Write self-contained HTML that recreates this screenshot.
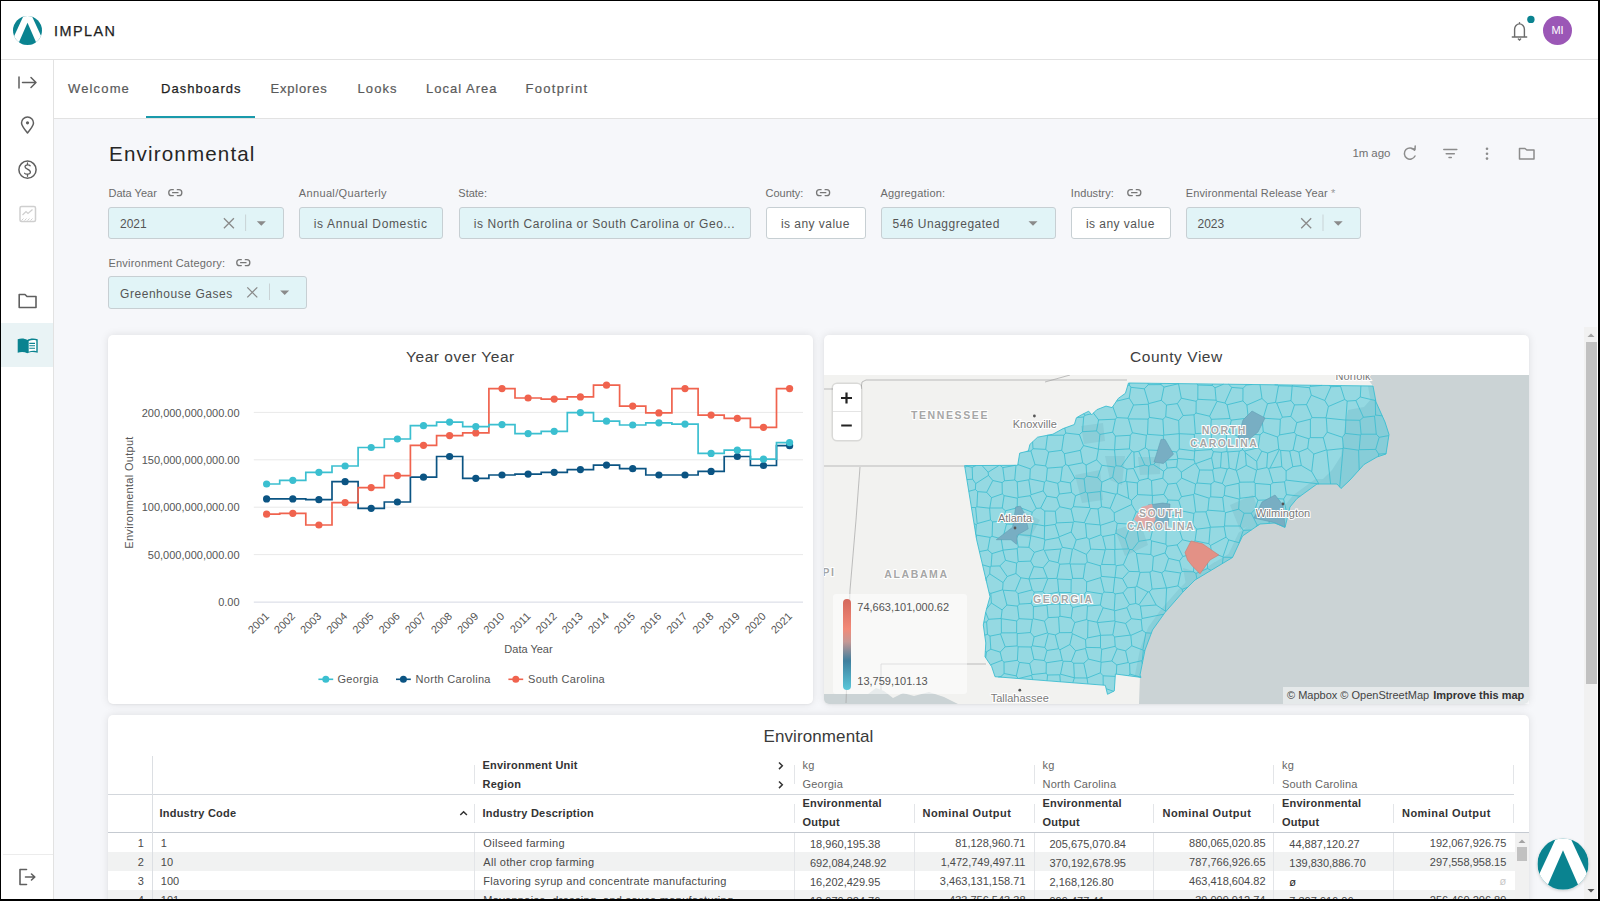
<!DOCTYPE html>
<html><head><meta charset="utf-8">
<style>
*{box-sizing:border-box;margin:0;padding:0}
html,body{width:1600px;height:901px;overflow:hidden;background:#f6f7fa}
body{font-family:"Liberation Sans",sans-serif;position:relative;color:#333}
.a{position:absolute}
.t{position:absolute;white-space:nowrap;line-height:1}
.bd{position:absolute;background:#000;z-index:100}
.lb{font-size:11px;color:#6b6b6b}
.ct{height:32px;border:1px solid #c7cfd3;border-radius:3px}
.tl{background:#e1f4f7}
.wh{background:#fff}
.cx{font-size:12px;color:#555}
.card{background:#fff;border-radius:5px;box-shadow:0 0 9px rgba(0,0,0,0.1),0 1px 2px rgba(0,0,0,0.04)}
svg text{font-family:"Liberation Sans",sans-serif}
.ax{font-size:11px;fill:#555}
.lg{font-size:11px;fill:#555;letter-spacing:0.3px}
.th{font-size:11px;font-weight:bold;color:#333;letter-spacing:0.22px}
.tr{font-size:11px;color:#666;letter-spacing:0.2px}
.tv{font-size:11px;color:#4a4a4a}
</style></head><body>
<!-- header -->
<div class="a" style="left:0;top:0;width:1600px;height:60px;background:#fff;border-bottom:1px solid #e2e2e2"></div>
<svg class="a" style="left:12.5px;top:16px" width="29" height="29" viewBox="0 0 100 100">
<defs><clipPath id="lc"><circle cx="50" cy="50" r="50"/></clipPath></defs>
<g clip-path="url(#lc)"><rect width="100" height="100" fill="#0a8390"/>
<polygon points="36,0 65,0 116,110 -15,110" fill="#fff"/>
<polygon points="50,23 88,110 12,110" fill="#0a8390"/></g></svg>
<div class="t" style="left:54px;top:23.6px;font-size:14.4px;color:#1e1e1e;-webkit-text-stroke:0.25px #1e1e1e;letter-spacing:1.45px">IMPLAN</div>
<!-- bell -->
<svg class="a" style="left:1508px;top:18px;overflow:visible" width="28" height="26" viewBox="0 0 28 26">
<path d="M4.3 19 H18.7 M6.6 19 V11.3 A4.9 5.4 0 0 1 16.4 11.3 V19 M11.5 4.6 V5.9 M10.4 20.9 L11.5 22 L12.6 20.9" stroke="#6b6b6b" stroke-width="1.4" fill="none" stroke-linecap="round"/>
<circle cx="22.9" cy="1.4" r="3.7" fill="#0a8390"/>
</svg>
<div class="a" style="left:1543px;top:16px;width:29px;height:29px;border-radius:50%;background:#9b57b6"></div>
<div class="t" style="left:1543px;top:25px;width:29px;text-align:center;font-size:11px;color:#fff">MI</div>

<!-- sidebar -->
<div class="a" style="left:0;top:60px;width:54px;height:841px;background:#fff;border-right:1px solid #e2e2e2"></div>
<div class="a" style="left:1px;top:323px;width:52px;height:44px;background:#e9f3f5"></div>
<div class="a" style="left:3px;top:854px;width:50px;height:1px;background:#ececec"></div>
<svg class="a" style="left:0;top:60px" width="54" height="841" viewBox="0 60 54 841">
<g stroke="#5f5f5f" stroke-width="1.5" fill="none" stroke-linecap="round" stroke-linejoin="round">
<path d="M19 77 V88 M22.5 82.5 H36 M31 77.5 L36 82.5 L31 87.5"/>
<path d="M27.5 133 C 23 127.5, 21.5 125.5, 21.5 123 A 6 6 0 1 1 33.5 123 C 33.5 125.5, 32 127.5, 27.5 133 Z"/>
<circle cx="27.5" cy="169.7" r="8.6"/>
<path d="M30.2 165.8 C 29.5 164.6, 25.2 164.2, 25 166.8 C 24.8 169.2, 30.6 169, 30.4 172.2 C 30.2 174.8, 25.4 174.6, 24.6 173.2 M27.5 163 V164.5 M27.5 174.8 V176.3" stroke-width="1.3"/>
<path d="M19.2 294.5 H25 L27 296.5 H36 V307.5 H19.2 Z" stroke-width="1.6"/>
<path d="M20.5 869.5 H26.5 M20 869.5 V884.5 M20.5 884.5 H26.5 M25.5 877 H34.5 M31.5 874 L34.8 877 L31.5 880" stroke-width="1.6"/>
</g>
<circle cx="27.5" cy="122.8" r="1.6" fill="#5f5f5f"/>
<g stroke="#cfcfcf" stroke-width="1.5" fill="none">
<rect x="20" y="206.5" width="15.5" height="15" rx="1.5"/>
<path d="M22.5 215 L26 211.5 L28 213.5 L32.5 209.5" stroke-width="1.2"/>
<path d="M21.5 220.5 L23.5 218.5 M24.5 220.5 L26.5 218.5 M27.5 220.5 L29.5 218.5 M30.5 220.5 L32.5 218.5" stroke-width="1"/>
</g>
<path d="M17.7 339.3 C 21 338, 24.5 338.2, 27.3 340 V353.3 C 24.5 351.8, 21 351.6, 17.7 352.8 Z M27.3 340 C 30 338.2, 34 338, 37.7 339.3 V352.8 C 34 351.6, 30 351.8, 27.3 353.3 Z" fill="#0a8390"/>
<path d="M28.7 341.1 C 31 339.9, 33.8 339.7, 36.3 340.4 V351.2 C 33.8 350.6, 31 350.8, 28.7 351.7 Z" fill="#fff"/>
<path d="M29.3 343.4 H35 M29.3 345.7 H35 M29.3 348.3 H35" stroke="#0a8390" stroke-width="1.1"/>
</svg>

<!-- tabs -->
<div class="a" style="left:54px;top:60px;width:1546px;height:59px;background:#fff;border-bottom:1px solid #e2e2e2"></div>
<div class="t" style="left:68px;top:82px;font-size:13px;color:#5a5a5a;-webkit-text-stroke:0.2px #5a5a5a;letter-spacing:1.15px">Welcome</div>
<div class="t" style="left:161px;top:82px;font-size:13px;color:#1f1f1f;-webkit-text-stroke:0.25px #1f1f1f;letter-spacing:1.05px">Dashboards</div>
<div class="a" style="left:146px;top:115.5px;width:109px;height:2.5px;background:#1a9aab"></div>
<div class="t" style="left:270.5px;top:82px;font-size:13px;color:#5a5a5a;-webkit-text-stroke:0.2px #5a5a5a;letter-spacing:0.8px">Explores</div>
<div class="t" style="left:357.5px;top:82px;font-size:13px;color:#5a5a5a;-webkit-text-stroke:0.2px #5a5a5a;letter-spacing:1.1px">Looks</div>
<div class="t" style="left:426px;top:82px;font-size:13px;color:#5a5a5a;-webkit-text-stroke:0.2px #5a5a5a;letter-spacing:1.0px">Local Area</div>
<div class="t" style="left:525.5px;top:82px;font-size:13px;color:#5a5a5a;-webkit-text-stroke:0.2px #5a5a5a;letter-spacing:1.3px">Footprint</div>

<!-- title & toolbar -->
<div class="t" style="left:109px;top:144px;font-size:20.6px;color:#262626;letter-spacing:1.15px">Environmental</div>
<div class="t" style="left:1352.5px;top:148px;font-size:11.5px;color:#707070;letter-spacing:-0.1px">1m ago</div>
<svg class="a" style="left:1395px;top:140px" width="145" height="28" viewBox="1395 140 145 28">
<g stroke="#8c8c8c" stroke-width="1.5" fill="none" stroke-linecap="round">
<path d="M1414.5 150.2 A 5.6 5.6 0 1 0 1415 156"/>
<path d="M1411.5 148.5 L1415 149.5 L1415.2 146" stroke-linejoin="round"/>
<path d="M1443.8 149.5 H1456.8 M1446.2 153.7 H1454.3 M1449 157.5 H1451.3"/>
<path d="M1519.5 148.5 H1525 L1526.8 150 H1534 V159 H1519.5 Z" stroke-linejoin="round"/>
</g>
<g fill="#8c8c8c"><circle cx="1487" cy="148.8" r="1.3"/><circle cx="1487" cy="153.7" r="1.3"/><circle cx="1487" cy="158.6" r="1.3"/></g>
</svg>

<!-- filters -->
<div class="t lb" style="left:108.5px;top:187.6px">Data Year</div>
<div class="t lb" style="left:298.8px;top:187.6px;letter-spacing:0.35px">Annual/Quarterly</div>
<div class="t lb" style="left:458.3px;top:187.6px">State:</div>
<div class="t lb" style="left:765.5px;top:187.6px">County:</div>
<div class="t lb" style="left:880.5px;top:187.6px;letter-spacing:0.2px">Aggregation:</div>
<div class="t lb" style="left:1070.8px;top:187.6px;letter-spacing:0.1px">Industry:</div>
<div class="t lb" style="left:1185.8px;top:187.6px;letter-spacing:0.12px">Environmental Release Year <span style="color:#999">*</span></div>
<div class="t lb" style="left:108.5px;top:258.3px;letter-spacing:0.2px">Environment Category:</div>
<svg class="a" style="left:0;top:180px" width="1400" height="100" viewBox="0 180 1400 100">
<g stroke="#777" stroke-width="1.3" fill="none" stroke-linecap="round">
<path id="lk" d="M173.3 189.7 H171.7 A2.95 2.95 0 0 0 171.7 195.6 H173.3 M177.3 189.7 H178.9 A2.95 2.95 0 0 1 178.9 195.6 H177.3 M172.6 192.65 H178"/>
<use href="#lk" x="647.8" y="0"/>
<use href="#lk" x="959" y="0"/>
<use href="#lk" x="68" y="70"/>
</g></svg>

<div class="a ct tl" style="left:108px;top:207px;width:176px"></div>
<div class="t cx" style="left:120px;top:217.6px">2021</div>
<div class="a ct tl" style="left:298.5px;top:207px;width:144.5px"></div>
<div class="t cx" style="left:313.8px;top:217.6px;letter-spacing:0.65px">is Annual Domestic</div>
<div class="a ct tl" style="left:458.5px;top:207px;width:292.5px"></div>
<div class="t cx" style="left:473.8px;top:217.6px;letter-spacing:0.56px">is North Carolina or South Carolina or Geo...</div>
<div class="a ct wh" style="left:765.5px;top:207px;width:100.5px"></div>
<div class="t cx" style="left:781px;top:217.6px;letter-spacing:0.45px">is any value</div>
<div class="a ct tl" style="left:880.5px;top:207px;width:175.5px"></div>
<div class="t cx" style="left:892.5px;top:217.6px;letter-spacing:0.5px">546 Unaggregated</div>
<div class="a ct wh" style="left:1070.8px;top:207px;width:100px"></div>
<div class="t cx" style="left:1086px;top:217.6px;letter-spacing:0.45px">is any value</div>
<div class="a ct tl" style="left:1185.8px;top:207px;width:175.5px"></div>
<div class="t cx" style="left:1197.5px;top:217.6px">2023</div>
<div class="a ct tl" style="left:108.2px;top:276.3px;width:198.5px;height:32.5px"></div>
<div class="t cx" style="left:120px;top:287.8px;letter-spacing:0.55px">Greenhouse Gases</div>
<svg class="a" style="left:0;top:200px" width="1400" height="120" viewBox="0 200 1400 120">
<g stroke="#8a8a8a" stroke-width="1.3" fill="none">
<path d="M223.9 218.2 L233.9 228.2 M233.9 218.2 L223.9 228.2"/>
<path d="M1301.2 218.2 L1311.2 228.2 M1311.2 218.2 L1301.2 228.2"/>
<path d="M247.3 287.4 L257.3 297.4 M257.3 287.4 L247.3 297.4"/>
</g>
<g stroke="#c9d3d6" stroke-width="1"><path d="M245.6 214.5 V231 M1323 214.5 V231 M269.5 283.5 V300"/></g>
<g fill="#8a8a8a">
<path d="M256.8 221.2 H265.8 L261.3 225.7 Z"/>
<path d="M1028.5 221.2 H1037.5 L1033 225.7 Z"/>
<path d="M1333.7 221.2 H1342.7 L1338.2 225.7 Z"/>
<path d="M280.2 290.4 H289.2 L284.7 294.9 Z"/>
</g></svg>

<!-- cards -->
<div class="a card" style="left:108px;top:335px;width:705px;height:369px"></div>
<div class="a card" style="left:824px;top:335px;width:705px;height:369px;overflow:hidden">
</div>
<div class="t" style="left:406px;top:349.2px;font-size:15.5px;color:#404040;letter-spacing:0.55px">Year over Year</div>
<div class="t" style="left:1130px;top:349.2px;font-size:15.5px;color:#404040;letter-spacing:0.55px">County View</div>

<svg class="a" style="left:108px;top:335px" width="705" height="368" viewBox="108 335 705 368">
<rect x="253.8" y="411.9" width="549.2" height="1" fill="#e9e9e9"/>
<rect x="253.8" y="459.3" width="549.2" height="1" fill="#e9e9e9"/>
<rect x="253.8" y="506.7" width="549.2" height="1" fill="#e9e9e9"/>
<rect x="253.8" y="554.1" width="549.2" height="1" fill="#e9e9e9"/>
<rect x="253.8" y="601.5" width="549.2" height="1.3" fill="#dfe1ea"/>
<text x="239.6" y="416.5" text-anchor="end" class="ax">200,000,000,000.00</text>
<text x="239.6" y="463.90000000000003" text-anchor="end" class="ax">150,000,000,000.00</text>
<text x="239.6" y="511.3" text-anchor="end" class="ax">100,000,000,000.00</text>
<text x="239.6" y="558.7" text-anchor="end" class="ax">50,000,000,000.00</text>
<text x="239.6" y="606.1" text-anchor="end" class="ax">0.00</text>
<text transform="translate(133.3 492.5) rotate(-90)" text-anchor="middle" class="ax" letter-spacing="0.3">Environmental Output</text>
<text transform="translate(269.8 617) rotate(-45)" text-anchor="end" class="ax">2001</text>
<text transform="translate(295.9 617) rotate(-45)" text-anchor="end" class="ax">2002</text>
<text transform="translate(322.1 617) rotate(-45)" text-anchor="end" class="ax">2003</text>
<text transform="translate(348.2 617) rotate(-45)" text-anchor="end" class="ax">2004</text>
<text transform="translate(374.4 617) rotate(-45)" text-anchor="end" class="ax">2005</text>
<text transform="translate(400.6 617) rotate(-45)" text-anchor="end" class="ax">2006</text>
<text transform="translate(426.7 617) rotate(-45)" text-anchor="end" class="ax">2007</text>
<text transform="translate(452.8 617) rotate(-45)" text-anchor="end" class="ax">2008</text>
<text transform="translate(479.0 617) rotate(-45)" text-anchor="end" class="ax">2009</text>
<text transform="translate(505.2 617) rotate(-45)" text-anchor="end" class="ax">2010</text>
<text transform="translate(531.3 617) rotate(-45)" text-anchor="end" class="ax">2011</text>
<text transform="translate(557.5 617) rotate(-45)" text-anchor="end" class="ax">2012</text>
<text transform="translate(583.6 617) rotate(-45)" text-anchor="end" class="ax">2013</text>
<text transform="translate(609.8 617) rotate(-45)" text-anchor="end" class="ax">2014</text>
<text transform="translate(635.9 617) rotate(-45)" text-anchor="end" class="ax">2015</text>
<text transform="translate(662.1 617) rotate(-45)" text-anchor="end" class="ax">2016</text>
<text transform="translate(688.2 617) rotate(-45)" text-anchor="end" class="ax">2017</text>
<text transform="translate(714.4 617) rotate(-45)" text-anchor="end" class="ax">2018</text>
<text transform="translate(740.5 617) rotate(-45)" text-anchor="end" class="ax">2019</text>
<text transform="translate(766.7 617) rotate(-45)" text-anchor="end" class="ax">2020</text>
<text transform="translate(792.8 617) rotate(-45)" text-anchor="end" class="ax">2021</text>
<text x="528.5" y="652.6" text-anchor="middle" class="ax">Data Year</text>
<path d="M266.6 498.9 H279.7 V498.9 H292.8 H305.8 V499.7 H318.9 H332.0 V481.7 H345.1 H358.1 V508.3 H371.2 H384.3 V502 H397.4 H410.4 V477.2 H423.5 H436.6 V456.5 H449.6 H462.7 V478.3 H475.8 H488.9 V475 H502.0 H515.0 V474.1 H528.1 H541.2 V472.3 H554.2 H567.3 V469.6 H580.4 H593.5 V465.1 H606.5 H619.6 V468.7 H632.7 H645.8 V475 H658.9 H671.9 V475 H685.0 H698.1 V471.4 H711.1 H724.2 V456.5 H737.3 H750.4 V465.5 H763.5 H776.5 V445.7 H789.6" stroke="#0b5483" stroke-width="1.7" fill="none" stroke-linejoin="miter"/>
<g fill="#0b5483"><circle cx="266.6" cy="498.9" r="3.6"/><circle cx="292.8" cy="498.9" r="3.6"/><circle cx="318.9" cy="499.7" r="3.6"/><circle cx="345.1" cy="481.7" r="3.6"/><circle cx="371.2" cy="508.3" r="3.6"/><circle cx="397.4" cy="502" r="3.6"/><circle cx="423.5" cy="477.2" r="3.6"/><circle cx="449.6" cy="456.5" r="3.6"/><circle cx="475.8" cy="478.3" r="3.6"/><circle cx="502.0" cy="475" r="3.6"/><circle cx="528.1" cy="474.1" r="3.6"/><circle cx="554.2" cy="472.3" r="3.6"/><circle cx="580.4" cy="469.6" r="3.6"/><circle cx="606.5" cy="465.1" r="3.6"/><circle cx="632.7" cy="468.7" r="3.6"/><circle cx="658.9" cy="475" r="3.6"/><circle cx="685.0" cy="475" r="3.6"/><circle cx="711.1" cy="471.4" r="3.6"/><circle cx="737.3" cy="456.5" r="3.6"/><circle cx="763.5" cy="465.5" r="3.6"/><circle cx="789.6" cy="445.7" r="3.6"/></g>
<path d="M266.6 514.2 H279.7 V513.3 H292.8 H305.8 V525 H318.9 H332.0 V502.6 H345.1 H358.1 V487.6 H371.2 H384.3 V475.6 H397.4 H410.4 V445.3 H423.5 H436.6 V435.6 H449.6 H462.7 V432.9 H475.8 H488.9 V388.6 H502.0 H515.0 V398 H528.1 H541.2 V399.1 H554.2 H567.3 V396.9 H580.4 H593.5 V385.2 H606.5 H619.6 V406.1 H632.7 H645.8 V412.9 H658.9 H671.9 V388.6 H685.0 H698.1 V415.1 H711.1 H724.2 V418.3 H737.3 H750.4 V427.3 H763.5 H776.5 V388.6 H789.6" stroke="#f0634e" stroke-width="1.7" fill="none" stroke-linejoin="miter"/>
<g fill="#f0634e"><circle cx="266.6" cy="514.2" r="3.6"/><circle cx="292.8" cy="513.3" r="3.6"/><circle cx="318.9" cy="525" r="3.6"/><circle cx="345.1" cy="502.6" r="3.6"/><circle cx="371.2" cy="487.6" r="3.6"/><circle cx="397.4" cy="475.6" r="3.6"/><circle cx="423.5" cy="445.3" r="3.6"/><circle cx="449.6" cy="435.6" r="3.6"/><circle cx="475.8" cy="432.9" r="3.6"/><circle cx="502.0" cy="388.6" r="3.6"/><circle cx="528.1" cy="398" r="3.6"/><circle cx="554.2" cy="399.1" r="3.6"/><circle cx="580.4" cy="396.9" r="3.6"/><circle cx="606.5" cy="385.2" r="3.6"/><circle cx="632.7" cy="406.1" r="3.6"/><circle cx="658.9" cy="412.9" r="3.6"/><circle cx="685.0" cy="388.6" r="3.6"/><circle cx="711.1" cy="415.1" r="3.6"/><circle cx="737.3" cy="418.3" r="3.6"/><circle cx="763.5" cy="427.3" r="3.6"/><circle cx="789.6" cy="388.6" r="3.6"/></g>
<path d="M266.6 484 H279.7 V480.3 H292.8 H305.8 V472.3 H318.9 H332.0 V466 H345.1 H358.1 V447.5 H371.2 H384.3 V439 H397.4 H410.4 V425.7 H423.5 H436.6 V422.1 H449.6 H462.7 V426.6 H475.8 H488.9 V424.6 H502.0 H515.0 V433.6 H528.1 H541.2 V431.3 H554.2 H567.3 V412.6 H580.4 H593.5 V421.2 H606.5 H619.6 V425 H632.7 H645.8 V422.8 H658.9 H671.9 V424.1 H685.0 H698.1 V453.4 H711.1 H724.2 V450.2 H737.3 H750.4 V459.2 H763.5 H776.5 V442.6 H789.6" stroke="#3bbfd0" stroke-width="1.7" fill="none" stroke-linejoin="miter"/>
<g fill="#3bbfd0"><circle cx="266.6" cy="484" r="3.6"/><circle cx="292.8" cy="480.3" r="3.6"/><circle cx="318.9" cy="472.3" r="3.6"/><circle cx="345.1" cy="466" r="3.6"/><circle cx="371.2" cy="447.5" r="3.6"/><circle cx="397.4" cy="439" r="3.6"/><circle cx="423.5" cy="425.7" r="3.6"/><circle cx="449.6" cy="422.1" r="3.6"/><circle cx="475.8" cy="426.6" r="3.6"/><circle cx="502.0" cy="424.6" r="3.6"/><circle cx="528.1" cy="433.6" r="3.6"/><circle cx="554.2" cy="431.3" r="3.6"/><circle cx="580.4" cy="412.6" r="3.6"/><circle cx="606.5" cy="421.2" r="3.6"/><circle cx="632.7" cy="425" r="3.6"/><circle cx="658.9" cy="422.8" r="3.6"/><circle cx="685.0" cy="424.1" r="3.6"/><circle cx="711.1" cy="453.4" r="3.6"/><circle cx="737.3" cy="450.2" r="3.6"/><circle cx="763.5" cy="459.2" r="3.6"/><circle cx="789.6" cy="442.6" r="3.6"/></g>
<rect x="318.4" y="678.5" width="14.8" height="1.6" fill="#3bbfd0"/><circle cx="325.8" cy="679.3" r="3.5" fill="#3bbfd0"/>
<text x="337.5" y="683.3" class="lg">Georgia</text>
<rect x="396" y="678.5" width="14.8" height="1.6" fill="#0b5483"/><circle cx="403.4" cy="679.3" r="3.5" fill="#0b5483"/>
<text x="415.6" y="683.3" class="lg">North Carolina</text>
<rect x="508.4" y="678.5" width="14.8" height="1.6" fill="#f0634e"/><circle cx="515.8" cy="679.3" r="3.5" fill="#f0634e"/>
<text x="528" y="683.3" class="lg">South Carolina</text>
</svg>
<svg class="a" style="left:824px;top:375px;border-radius:0 0 5px 5px" width="705" height="329" viewBox="824 375 705 329">
<rect x="824" y="375" width="705" height="329" fill="#f2f2f0"/>
<path d="M1365 375 L1529 375 L1529 704 L1139 704 L1140 675 L1145 650 L1152.5 630 L1165 612.5 L1182.5 592.5 L1195 580 L1220 565 L1232.5 557.5 L1242.5 536 L1260 524 L1275 523 L1285 527.5 L1290 507 L1297 498.5 L1317 484 L1337 484 L1341 488.5 L1350 480 L1364 464.5 L1377 457 L1386 454 L1389 434.5 L1385 422 L1376 402 L1373 386Z" fill="#cbd3d5"/>
<path d="M824 694 L868 694 L876 688 L884 691 L893 698 L903 693 L914 696 L929 692 L944 697 L958 704 L824 704Z" fill="#cbd3d5"/>
<g stroke="#a5a5a5" stroke-width="0.7" fill="none"><path d="M824 389 H861 L862 382 L866 380 H1127"/><path d="M1045 382 L1070 375"/><path d="M824 466 H965"/><path d="M860 467 L856 520 L850 590 L846 703"/><path d="M881 690 V664 H986"/></g>
<path d="M1128.5 383.0 L1373.0 386.0 L1376.0 402.0 L1385.0 422.0 L1389.0 434.5 L1386.0 454.0 L1377.0 457.0 L1364.0 464.5 L1350.0 480.0 L1341.0 488.5 L1337.0 484.0 L1317.0 484.0 L1297.0 498.5 L1290.0 507.0 L1285.0 527.5 L1275.0 523.0 L1260.0 524.0 L1242.5 536.0 L1232.5 557.5 L1220.0 565.0 L1195.0 580.0 L1182.5 592.5 L1165.0 612.5 L1152.5 630.0 L1145.0 650.0 L1140.0 675.0 L1141.0 677.4 L1115.4 674.0 L1114.3 690.9 L1107.5 694.3 L1105.3 685.3 L995.0 676.7 L991.7 666.7 L985.0 656.7 L985.8 643.0 L983.3 625.0 L985.8 611.7 L990.0 596.7 L976.7 540.0 L964.6 465.6 L1017.7 465.3 L1019.7 453.1 L1028.4 451.0 L1029.9 444.4 L1037.6 437.2 L1052.9 434.2 L1063.1 428.6 L1074.4 424.5 L1076.4 417.8 L1081.5 414.8 L1088.7 411.2 L1091.7 414.8 L1096.8 409.7 L1106.0 406.1 L1112.1 407.6 L1118.3 398.4 L1125.4 393.3 L1128.5 383.0Z" fill="#95d9e2"/>
<path d="M1371.2 403.5 L1371.4 404.1 L1380.3 423.8 L1383.9 434.9 L1381.5 450.2 L1375.4 452.3 L1374.9 452.4 L1374.5 452.7 L1361.5 460.2 L1361.1 460.5 L1360.7 460.8 L1360.3 461.1 L1346.4 476.5 L1341.3 481.3 L1340.7 480.7 L1340.4 480.3 L1340.1 480.0 L1339.7 479.8 L1339.3 479.5 L1338.8 479.3 L1338.4 479.2 L1337.9 479.1 L1337.5 479.0 L1337.0 479.0 L1317.0 479.0 L1316.5 479.0 L1316.0 479.1 L1315.5 479.2 L1315.0 479.4 L1314.5 479.7 L1314.1 480.0 L1294.1 494.5 L1293.7 494.7 L1293.4 495.0 L1293.1 495.3 L1286.1 503.8 L1285.9 504.2 L1285.6 504.6 L1285.4 505.0 L1285.3 505.4 L1285.1 505.8 L1281.6 520.5 L1277.1 518.4 L1276.6 518.3 L1276.1 518.1 L1275.6 518.0 L1275.2 518.0 L1274.7 518.0 L1259.7 519.0 L1259.1 519.1 L1258.6 519.2 L1258.1 519.4 L1257.6 519.6 L1257.2 519.9 L1239.7 531.9 L1239.2 532.2 L1238.9 532.6 L1238.5 533.0 L1238.2 533.4 L1238.0 533.9 L1228.6 554.0 L1192.4 575.7 L1191.9 576.1 L1191.5 576.5 L1179.0 589.0 L1178.7 589.2 L1161.2 609.2 L1160.9 609.6 L1148.4 627.1 L1148.2 627.5 L1148.0 627.8 L1147.8 628.2 L1140.3 648.2 L1140.2 648.6 L1140.1 649.0 L1135.1 674.0 L1135.0 674.5 L1135.0 675.0 L1135.0 675.5 L1135.1 676.0 L1135.2 676.4 L1135.3 676.6 L1141.0 677.4 L1140.0 675.0 L1145.0 650.0 L1152.5 630.0 L1165.0 612.5 L1182.5 592.5 L1195.0 580.0 L1220.0 565.0 L1232.5 557.5 L1242.5 536.0 L1260.0 524.0 L1275.0 523.0 L1285.0 527.5 L1290.0 507.0 L1297.0 498.5 L1317.0 484.0 L1337.0 484.0 L1341.0 488.5 L1350.0 480.0 L1364.0 464.5 L1377.0 457.0 L1386.0 454.0 L1389.0 434.5 L1385.0 422.0 L1376.0 402.0 L1373.0 386.0 L1368.0 385.9 L1368.0 385.9 L1368.0 386.4 L1368.1 386.9 L1371.1 402.9 L1371.2 403.5Z" fill="#89cfd9"/>
<path d="M1372.0 398.0 L1364.0 407.0 L1348.0 410.0 L1344.0 432.0 L1341.0 456.0 L1332.0 470.0 L1320.0 482.0 L1337.0 484.0 L1341.0 488.5 L1350.0 480.0 L1364.0 464.5 L1377.0 457.0 L1386.0 454.0 L1389.0 434.5 L1385.0 422.0 L1376.0 402.0 L1372.0 398.0Z" fill="#87cdd8"/>
<path d="" fill="#86c9d5"/>
<path d="M1082.0 503.0 L1103.0 500.0 L1100.0 470.0 L1075.0 475.0 L1082.0 503.0Z" fill="#8bced8"/>
<path d="M1110.0 480.0 L1122.0 485.0 L1125.0 456.0 L1105.0 456.0 L1110.0 480.0Z" fill="#8bced8"/>
<path d="M1084.0 444.0 L1105.0 441.0 L1103.0 423.0 L1081.0 426.0 L1084.0 444.0Z" fill="#8bced8"/>
<path d="M1125.0 556.0 L1148.0 545.0 L1140.0 522.0 L1115.0 530.0 L1125.0 556.0Z" fill="#8bced8"/>
<path d="M1140.0 475.0 L1160.0 474.0 L1160.0 457.0 L1138.0 457.0 L1140.0 475.0Z" fill="#8bced8"/>
<path d="M1020.0 535.0 L1030.0 538.0 L1040.0 520.0 L1024.0 512.0 L1020.0 535.0Z" fill="#8bced8"/>
<path d="M1240.0 530.0 L1262.0 520.0 L1253.0 495.0 L1230.0 505.0 L1240.0 530.0Z" fill="#8bced8"/>
<path d="M1215.0 562.0 L1200.0 573.0 L1183.0 568.0 L1186.0 585.0 L1188.9 586.1 L1195.0 580.0 L1217.4 566.5 L1215.0 562.0Z" fill="#8bced8"/>
<path d="M964.9 467.3 L966.9 466.2 M966.9 466.2 L966.7 465.6 M975.7 533.7 L976.3 524.6 M976.3 524.6 L974.1 523.7 M966.9 479.6 L972.6 479.2 M972.6 479.2 L972.2 467.3 M972.2 467.3 L966.9 466.2 M968.8 491.3 L975.4 489.5 M975.4 489.5 L975.7 483.6 M975.7 483.6 L972.6 479.2 M976.3 524.6 L977.2 523.6 M977.2 523.6 L975.6 507.5 M975.6 507.5 L971.4 507.5 M972.2 467.3 L976.0 465.5 M976.3 537.4 L976.5 535.1 M976.5 535.1 L975.8 534.3 M975.6 507.5 L976.9 506.8 M976.9 506.8 L977.7 491.6 M977.7 491.6 L975.4 489.5 M975.7 483.6 L988.5 475.4 M988.5 475.4 L988.1 472.2 M988.1 472.2 L982.0 465.5 M982.5 564.8 L990.1 567.0 M990.1 567.0 L991.1 566.2 M991.1 566.2 L992.0 553.6 M992.0 553.6 L987.8 550.0 M987.8 550.0 L979.4 551.6 M985.7 578.3 L986.2 578.4 M986.2 578.4 L989.7 573.8 M989.7 573.8 L990.1 567.0 M986.3 581.0 L986.2 578.4 M976.5 535.1 L990.1 537.4 M990.1 537.4 L992.1 536.3 M992.1 536.3 L992.6 521.8 M992.6 521.8 L990.5 519.9 M990.5 519.9 L977.2 523.6 M984.7 635.1 L987.5 634.4 M987.5 634.4 L986.6 622.0 M986.6 622.0 L983.8 622.1 M985.7 657.7 L986.4 651.9 M986.4 651.9 L985.3 651.5 M986.6 622.0 L988.5 619.3 M988.5 619.3 L985.7 612.4 M986.6 608.8 L991.4 603.0 M991.4 603.0 L990.8 593.4 M990.8 593.4 L989.0 592.5 M977.7 491.6 L986.7 492.3 M986.7 492.3 L992.8 480.5 M992.8 480.5 L988.5 475.4 M990.5 519.9 L989.6 508.2 M989.6 508.2 L976.9 506.8 M987.8 550.0 L990.1 537.4 M988.5 619.3 L1001.1 618.5 M1001.1 618.5 L1002.1 609.9 M1002.1 609.9 L991.4 603.0 M986.4 651.9 L990.8 649.2 M990.8 649.2 L990.0 636.1 M990.0 636.1 L987.5 634.4 M989.6 508.2 L989.8 508.0 M989.8 508.0 L991.5 497.7 M991.5 497.7 L986.7 492.3 M990.8 593.4 L1002.6 589.8 M1002.6 589.8 L1003.1 582.6 M1003.1 582.6 L989.7 573.8 M990.5 664.8 L1002.1 660.3 M1002.1 660.3 L1000.2 652.1 M1000.2 652.1 L990.8 649.2 M998.3 677.0 L1001.0 676.5 M1001.0 676.5 L1004.1 673.5 M1004.1 673.5 L1004.0 662.2 M1004.0 662.2 L1002.1 660.3 M990.0 636.1 L1000.5 634.0 M1000.5 634.0 L1001.4 632.9 M1001.4 632.9 L1001.3 618.7 M1001.3 618.7 L1001.1 618.5 M988.1 472.2 L999.1 465.4 M1003.1 582.6 L1007.2 576.5 M1007.2 576.5 L999.8 565.9 M999.8 565.9 L991.1 566.2 M992.6 521.8 L1003.4 521.3 M1003.4 521.3 L1005.5 510.8 M1005.5 510.8 L1002.2 508.0 M1002.2 508.0 L989.8 508.0 M992.8 480.5 L1002.1 482.6 M1002.1 482.6 L1004.5 480.8 M1004.5 480.8 L1002.8 467.6 M1002.8 467.6 L1000.1 465.4 M992.0 553.6 L1002.9 550.3 M1002.9 550.3 L1003.0 550.1 M1003.0 550.1 L1001.2 538.9 M1001.2 538.9 L992.1 536.3 M991.5 497.7 L1002.3 493.9 M1002.3 493.9 L1002.1 482.6 M1000.2 652.1 L1005.2 646.8 M1005.2 646.8 L1000.5 634.0 M1002.1 609.9 L1006.9 605.0 M1006.9 605.0 L1003.2 590.2 M1003.2 590.2 L1002.6 589.8 M999.8 565.9 L1005.5 560.3 M1005.5 560.3 L1002.9 550.3 M1001.3 618.7 L1016.7 620.9 M1016.7 620.9 L1019.0 618.7 M1019.0 618.7 L1017.5 606.1 M1017.5 606.1 L1006.9 605.0 M1001.3 677.2 L1001.0 676.5 M1018.2 678.5 L1016.3 675.9 M1016.3 675.9 L1004.1 673.5 M1004.0 662.2 L1017.4 660.3 M1017.4 660.3 L1018.1 646.8 M1018.1 646.8 L1017.2 645.9 M1017.2 645.9 L1005.2 646.8 M1001.2 538.9 L1003.0 537.7 M1003.0 537.7 L1006.5 524.0 M1006.5 524.0 L1003.4 521.3 M1002.8 467.6 L1015.4 465.3 M1002.2 508.0 L1004.1 495.6 M1004.1 495.6 L1002.3 493.9 M1005.5 560.3 L1016.7 563.1 M1016.7 563.1 L1018.2 561.6 M1018.2 561.6 L1017.2 548.7 M1017.2 548.7 L1003.0 550.1 M1017.2 548.7 L1018.3 547.0 M1018.3 547.0 L1016.5 538.1 M1016.5 538.1 L1003.0 537.7 M1004.1 495.6 L1017.4 498.2 M1017.4 498.2 L1018.0 497.5 M1018.0 497.5 L1017.2 481.8 M1017.2 481.8 L1014.7 480.0 M1014.7 480.0 L1004.5 480.8 M1001.4 632.9 L1016.6 632.8 M1016.6 632.8 L1016.7 620.9 M1003.2 590.2 L1015.4 591.0 M1015.4 591.0 L1020.9 577.8 M1020.9 577.8 L1015.9 573.5 M1015.9 573.5 L1007.2 576.5 M1017.2 645.9 L1017.2 633.6 M1017.2 633.6 L1016.6 632.8 M1006.5 524.0 L1017.0 524.3 M1017.0 524.3 L1017.6 523.7 M1017.6 523.7 L1016.1 508.1 M1016.1 508.1 L1005.5 510.8 M1016.1 508.1 L1017.2 506.5 M1017.2 506.5 L1017.4 498.2 M1026.6 451.4 L1030.9 451.0 M1030.9 451.0 L1033.0 448.7 M1033.0 448.7 L1032.6 441.8 M1015.9 573.5 L1016.7 563.1 M1014.7 480.0 L1016.0 465.3 M1016.5 538.1 L1018.5 534.7 M1018.5 534.7 L1017.0 524.3 M1018.6 678.5 L1031.6 675.3 M1031.6 675.3 L1032.0 674.6 M1032.0 674.6 L1029.7 663.6 M1029.7 663.6 L1019.4 662.4 M1019.4 662.4 L1016.3 675.9 M1017.5 606.1 L1019.3 604.1 M1019.3 604.1 L1018.0 593.6 M1018.0 593.6 L1015.4 591.0 M1017.2 633.6 L1030.4 632.5 M1030.4 632.5 L1032.4 619.4 M1032.4 619.4 L1019.0 618.7 M1017.2 481.8 L1028.8 479.8 M1028.8 479.8 L1029.8 478.9 M1029.8 478.9 L1030.3 468.9 M1030.3 468.9 L1017.8 464.5 M1018.1 646.8 L1031.1 647.0 M1031.1 647.0 L1032.3 645.8 M1032.3 645.8 L1034.1 636.9 M1034.1 636.9 L1030.4 632.5 M1019.4 662.4 L1017.4 660.3 M1017.2 506.5 L1032.2 512.2 M1032.2 512.2 L1036.3 508.4 M1036.3 508.4 L1030.2 495.7 M1030.2 495.7 L1018.0 497.5 M1018.3 547.0 L1028.9 547.3 M1028.9 547.3 L1030.9 535.7 M1030.9 535.7 L1030.7 535.5 M1030.7 535.5 L1018.5 534.7 M1017.6 523.7 L1030.7 521.1 M1030.7 521.1 L1032.2 512.2 M1020.9 577.8 L1028.9 578.9 M1028.9 578.9 L1033.7 566.6 M1033.7 566.6 L1030.6 561.1 M1030.6 561.1 L1018.2 561.6 M1018.0 593.6 L1032.1 589.9 M1032.1 589.9 L1029.0 578.9 M1029.0 578.9 L1028.9 578.9 M1032.4 619.4 L1033.3 618.8 M1033.3 618.8 L1033.4 606.7 M1033.4 606.7 L1031.2 603.4 M1031.2 603.4 L1019.3 604.1 M1030.6 561.1 L1034.4 552.3 M1034.4 552.3 L1028.9 547.3 M1029.7 663.6 L1033.9 659.4 M1033.9 659.4 L1031.1 647.0 M1030.7 535.5 L1032.9 523.8 M1032.9 523.8 L1030.7 521.1 M1030.2 495.7 L1031.0 494.7 M1031.0 494.7 L1028.8 479.8 M1032.6 679.6 L1031.6 675.3 M1030.3 468.9 L1035.0 464.6 M1035.0 464.6 L1030.9 451.0 M1035.0 464.6 L1045.6 465.9 M1045.6 465.9 L1048.7 452.0 M1048.7 452.0 L1045.7 449.4 M1045.7 449.4 L1033.0 448.7 M1031.2 603.4 L1034.3 592.1 M1034.3 592.1 L1032.1 589.9 M1031.0 494.7 L1043.2 490.9 M1043.2 490.9 L1044.5 482.0 M1044.5 482.0 L1029.8 478.9 M1029.0 578.9 L1047.3 578.1 M1047.3 578.1 L1043.2 567.7 M1043.2 567.7 L1033.7 566.6 M1034.4 552.3 L1043.5 549.6 M1043.5 549.6 L1044.9 540.1 M1044.9 540.1 L1044.3 539.0 M1044.3 539.0 L1030.9 535.7 M1043.2 567.7 L1049.0 560.6 M1049.0 560.6 L1044.3 550.3 M1044.3 550.3 L1043.5 549.6 M1032.9 523.8 L1044.6 525.9 M1044.6 525.9 L1044.8 511.0 M1044.8 511.0 L1040.7 508.1 M1040.7 508.1 L1036.3 508.4 M1044.3 539.0 L1044.6 525.9 M1044.6 525.9 L1044.6 525.9 M1033.9 659.4 L1044.3 660.5 M1044.3 660.5 L1046.9 650.5 M1046.9 650.5 L1044.8 647.4 M1044.8 647.4 L1032.3 645.8 M1034.1 636.9 L1047.5 632.9 M1047.5 632.9 L1044.5 621.1 M1044.5 621.1 L1033.3 618.8 M1044.5 482.0 L1046.2 480.6 M1046.2 480.6 L1047.4 468.1 M1047.4 468.1 L1045.6 465.9 M1045.7 449.4 L1047.5 435.3 M1047.5 435.3 L1047.4 435.3 M1047.0 680.8 L1047.6 675.0 M1047.6 675.0 L1046.1 673.1 M1046.1 673.1 L1032.0 674.6 M1046.1 673.1 L1046.3 662.8 M1046.3 662.8 L1044.3 660.5 M1040.7 508.1 L1046.7 496.2 M1046.7 496.2 L1043.2 490.9 M1034.3 592.1 L1042.7 591.6 M1042.7 591.6 L1047.8 578.6 M1047.8 578.6 L1047.3 578.1 M1033.4 606.7 L1047.0 605.2 M1047.0 605.2 L1047.5 604.4 M1047.5 604.4 L1045.9 594.5 M1045.9 594.5 L1042.7 591.6 M1044.8 647.4 L1048.3 633.5 M1048.3 633.5 L1047.5 632.9 M1044.8 511.0 L1055.3 511.2 M1055.3 511.2 L1059.8 506.8 M1059.8 506.8 L1056.9 497.8 M1056.9 497.8 L1046.7 496.2 M1044.3 550.3 L1060.8 549.0 M1060.8 549.0 L1062.4 547.3 M1062.4 547.3 L1058.8 537.5 M1058.8 537.5 L1044.9 540.1 M1056.9 497.8 L1059.3 494.0 M1059.3 494.0 L1057.7 483.3 M1057.7 483.3 L1046.2 480.6 M1048.1 617.6 L1044.5 621.1 M1048.3 633.5 L1055.3 634.9 M1055.3 634.9 L1059.5 632.7 M1059.5 632.7 L1058.6 617.1 M1058.6 617.1 L1048.1 617.6 M1048.1 617.6 L1047.0 605.2 M1047.6 675.0 L1059.8 674.8 M1059.8 674.8 L1060.5 674.2 M1060.5 674.2 L1063.2 661.2 M1063.2 661.2 L1062.3 660.4 M1062.3 660.4 L1046.3 662.8 M1047.8 578.6 L1056.9 578.4 M1056.9 578.4 L1059.7 564.2 M1059.7 564.2 L1058.2 562.7 M1058.2 562.7 L1049.0 560.6 M1058.8 537.5 L1059.2 536.8 M1059.2 536.8 L1055.3 524.4 M1055.3 524.4 L1044.6 525.9 M1045.9 594.5 L1058.8 592.0 M1058.8 592.0 L1057.6 579.0 M1057.6 579.0 L1056.9 578.4 M1055.3 524.4 L1056.5 522.9 M1056.5 522.9 L1055.3 511.2 M1047.4 468.1 L1062.3 467.0 M1062.3 467.0 L1065.7 464.5 M1065.7 464.5 L1064.3 453.7 M1064.3 453.7 L1061.7 450.3 M1061.7 450.3 L1048.7 452.0 M1046.9 650.5 L1058.6 648.7 M1058.6 648.7 L1055.3 634.9 M1062.3 660.4 L1059.9 649.8 M1059.9 649.8 L1058.6 648.7 M1061.7 450.3 L1063.9 435.2 M1063.9 435.2 L1047.5 435.3 M1056.5 522.9 L1073.3 522.2 M1073.3 522.2 L1073.9 521.5 M1073.9 521.5 L1071.1 509.2 M1071.1 509.2 L1059.8 506.8 M1063.9 435.2 L1065.8 433.0 M1065.8 433.0 L1064.7 428.0 M1059.7 564.2 L1069.8 563.7 M1069.8 563.7 L1072.4 549.1 M1072.4 549.1 L1062.4 547.3 M1060.8 549.0 L1058.2 562.7 M1047.5 604.4 L1059.4 604.1 M1059.4 604.1 L1059.3 592.5 M1059.3 592.5 L1058.8 592.0 M1058.6 617.1 L1060.0 616.2 M1060.0 616.2 L1059.8 604.4 M1059.8 604.4 L1059.4 604.1 M1064.3 453.7 L1080.4 450.3 M1080.4 450.3 L1083.5 445.6 M1083.5 445.6 L1079.4 434.6 M1079.4 434.6 L1065.8 433.0 M1071.1 509.2 L1073.3 506.7 M1073.3 506.7 L1075.5 495.7 M1075.5 495.7 L1071.6 492.5 M1071.6 492.5 L1059.3 494.0 M1060.3 681.8 L1059.8 674.8 M1057.6 579.0 L1071.2 579.6 M1071.2 579.6 L1072.7 578.4 M1072.7 578.4 L1070.2 564.0 M1070.2 564.0 L1069.8 563.7 M1057.7 483.3 L1060.5 481.2 M1060.5 481.2 L1062.3 467.0 M1059.9 649.8 L1069.9 644.5 M1069.9 644.5 L1072.4 633.7 M1072.4 633.7 L1071.8 632.6 M1071.8 632.6 L1059.5 632.7 M1060.5 481.2 L1070.4 482.9 M1070.4 482.9 L1074.9 478.2 M1074.9 478.2 L1068.2 465.6 M1068.2 465.6 L1065.7 464.5 M1071.6 492.5 L1070.4 482.9 M1059.2 536.8 L1071.2 532.0 M1071.2 532.0 L1073.3 522.2 M1072.8 682.8 L1074.4 677.9 M1074.4 677.9 L1074.4 677.8 M1074.4 677.8 L1060.5 674.2 M1059.8 604.4 L1069.9 603.8 M1069.9 603.8 L1072.5 593.9 M1072.5 593.9 L1071.0 592.5 M1071.0 592.5 L1059.3 592.5 M1071.8 632.6 L1074.8 622.5 M1074.8 622.5 L1071.1 618.0 M1071.1 618.0 L1060.0 616.2 M1071.0 592.5 L1071.2 579.6 M1072.4 549.1 L1073.4 548.5 M1073.4 548.5 L1076.2 539.9 M1076.2 539.9 L1071.2 532.0 M1079.4 434.6 L1082.5 431.7 M1082.5 431.7 L1083.7 417.0 M1083.7 417.0 L1077.0 417.5 M1063.2 661.2 L1071.3 661.5 M1071.3 661.5 L1075.6 650.8 M1075.6 650.8 L1069.9 644.5 M1071.1 618.0 L1072.7 607.5 M1072.7 607.5 L1069.9 603.8 M1076.2 539.9 L1086.7 537.6 M1086.7 537.6 L1085.5 523.6 M1085.5 523.6 L1084.4 522.7 M1084.4 522.7 L1073.9 521.5 M1072.7 607.5 L1086.4 604.8 M1086.4 604.8 L1084.4 594.3 M1084.4 594.3 L1072.5 593.9 M1075.6 650.8 L1085.5 648.5 M1085.5 648.5 L1086.0 647.4 M1086.0 647.4 L1085.5 639.6 M1085.5 639.6 L1072.4 633.7 M1084.4 522.7 L1090.6 508.5 M1090.6 508.5 L1089.7 507.6 M1089.7 507.6 L1073.3 506.7 M1074.4 677.9 L1087.0 678.0 M1087.0 678.0 L1083.8 663.2 M1083.8 663.2 L1073.7 663.2 M1073.7 663.2 L1074.4 677.8 M1072.7 578.4 L1083.2 578.4 M1083.2 578.4 L1085.3 564.1 M1085.3 564.1 L1070.2 564.0 M1073.7 663.2 L1071.3 661.5 M1084.4 594.3 L1086.4 591.4 M1086.4 591.4 L1086.7 581.9 M1086.7 581.9 L1083.2 578.4 M1087.9 683.9 L1087.0 678.1 M1087.0 678.1 L1087.0 678.0 M1075.5 495.7 L1085.5 492.0 M1085.5 492.0 L1084.1 478.9 M1084.1 478.9 L1074.9 478.2 M1068.2 465.6 L1082.7 462.8 M1082.7 462.8 L1080.4 450.3 M1083.8 663.2 L1088.4 659.1 M1088.4 659.1 L1085.5 648.5 M1074.8 622.5 L1086.7 619.5 M1086.7 619.5 L1087.5 606.1 M1087.5 606.1 L1086.4 604.8 M1083.7 417.0 L1084.8 415.3 M1084.8 415.3 L1083.8 413.7 M1084.1 478.9 L1086.7 476.1 M1086.7 476.1 L1086.1 465.0 M1086.1 465.0 L1082.7 462.8 M1086.1 465.0 L1096.6 459.8 M1096.6 459.8 L1098.5 449.3 M1098.5 449.3 L1098.4 449.2 M1098.4 449.2 L1083.5 445.6 M1098.4 449.2 L1099.9 434.4 M1099.9 434.4 L1096.5 430.9 M1096.5 430.9 L1082.5 431.7 M1084.8 415.3 L1091.0 413.9 M1093.1 413.4 L1093.6 413.3 M1093.6 413.3 L1093.9 412.6 M1085.5 639.6 L1087.6 637.9 M1087.6 637.9 L1088.0 620.4 M1088.0 620.4 L1086.7 619.5 M1085.3 564.1 L1087.3 562.0 M1087.3 562.0 L1086.4 554.4 M1086.4 554.4 L1073.4 548.5 M1086.4 554.4 L1090.6 549.1 M1090.6 549.1 L1089.1 539.2 M1089.1 539.2 L1086.7 537.6 M1086.7 581.9 L1100.6 577.6 M1100.6 577.6 L1101.4 576.4 M1101.4 576.4 L1100.3 565.8 M1100.3 565.8 L1087.3 562.0 M1087.5 606.1 L1100.4 605.0 M1100.4 605.0 L1102.3 593.9 M1102.3 593.9 L1086.4 591.4 M1089.7 507.6 L1087.3 493.0 M1087.3 493.0 L1085.5 492.0 M1087.3 493.0 L1100.3 491.5 M1100.3 491.5 L1101.0 490.9 M1101.0 490.9 L1101.8 482.1 M1101.8 482.1 L1097.6 477.6 M1097.6 477.6 L1086.7 476.1 M1087.0 678.1 L1100.4 672.8 M1100.4 672.8 L1101.1 662.3 M1101.1 662.3 L1100.8 662.0 M1100.8 662.0 L1088.4 659.1 M1089.1 539.2 L1100.9 534.8 M1100.9 534.8 L1100.5 525.3 M1100.5 525.3 L1100.0 524.9 M1100.0 524.9 L1085.5 523.6 M1086.0 647.4 L1100.5 647.7 M1100.5 647.7 L1100.5 635.4 M1100.5 635.4 L1087.6 637.9 M1096.5 430.9 L1098.6 419.9 M1098.6 419.9 L1093.6 413.3 M1100.3 565.8 L1101.7 564.4 M1101.7 564.4 L1105.2 549.8 M1105.2 549.8 L1090.6 549.1 M1100.0 524.9 L1098.0 508.9 M1098.0 508.9 L1090.6 508.5 M1088.0 620.4 L1097.0 622.2 M1097.0 622.2 L1103.1 607.8 M1103.1 607.8 L1100.4 605.0 M1100.8 662.0 L1101.7 649.4 M1101.7 649.4 L1100.5 647.7 M1100.5 635.4 L1100.6 635.3 M1100.6 635.3 L1097.5 622.6 M1097.5 622.6 L1097.0 622.2 M1097.6 477.6 L1101.8 465.3 M1101.8 465.3 L1096.6 459.8 M1098.6 419.9 L1115.4 419.2 M1115.4 419.2 L1116.8 417.6 M1116.8 417.6 L1112.8 406.6 M1102.3 593.9 L1104.2 592.1 M1104.2 592.1 L1100.6 577.6 M1098.0 508.9 L1101.5 506.8 M1101.5 506.8 L1100.3 491.5 M1101.1 662.3 L1111.8 661.0 M1111.8 661.0 L1117.0 648.8 M1117.0 648.8 L1115.2 646.3 M1115.2 646.3 L1101.7 649.4 M1103.2 685.1 L1103.1 675.8 M1103.1 675.8 L1100.4 672.8 M1097.5 622.6 L1114.9 620.8 M1114.9 620.8 L1114.6 610.8 M1114.6 610.8 L1114.2 610.3 M1114.2 610.3 L1103.1 607.8 M1101.8 465.3 L1114.5 467.0 M1114.5 467.0 L1116.0 465.7 M1116.0 465.7 L1114.5 449.8 M1114.5 449.8 L1098.5 449.3 M1105.2 549.8 L1105.8 549.3 M1105.8 549.3 L1102.7 536.5 M1102.7 536.5 L1100.9 534.8 M1101.5 506.8 L1110.2 508.3 M1110.2 508.3 L1115.9 494.2 M1115.9 494.2 L1101.0 490.9 M1115.2 646.3 L1114.6 637.0 M1114.6 637.0 L1112.8 634.9 M1112.8 634.9 L1100.6 635.3 M1112.8 634.9 L1115.2 621.4 M1115.2 621.4 L1114.9 620.8 M1101.7 564.4 L1115.1 564.7 M1115.1 564.7 L1114.7 549.5 M1114.7 549.5 L1105.8 549.3 M1114.2 610.3 L1115.2 593.9 M1115.2 593.9 L1113.2 592.6 M1113.2 592.6 L1104.2 592.1 M1100.5 525.3 L1114.5 520.8 M1114.5 520.8 L1114.2 512.8 M1114.2 512.8 L1110.2 508.3 M1102.7 536.5 L1114.7 534.3 M1114.7 534.3 L1115.9 533.0 M1115.9 533.0 L1117.2 523.3 M1117.2 523.3 L1114.5 520.8 M1113.2 592.6 L1114.8 577.5 M1114.8 577.5 L1101.4 576.4 M1113.6 691.3 L1106.1 688.7 M1101.8 482.1 L1112.7 477.3 M1112.7 477.3 L1114.5 467.0 M1099.9 434.4 L1112.7 432.2 M1112.7 432.2 L1115.4 419.2 M1116.4 401.2 L1129.2 398.1 M1129.2 398.1 L1130.9 387.3 M1130.9 387.3 L1129.4 385.1 M1129.4 385.1 L1127.8 385.2 M1129.4 385.1 L1129.7 383.0 M1114.8 577.5 L1115.0 577.4 M1115.0 577.4 L1116.3 565.7 M1116.3 565.7 L1115.1 564.7 M1115.9 494.2 L1117.2 493.6 M1117.2 493.6 L1118.2 483.5 M1118.2 483.5 L1112.7 477.3 M1114.5 449.8 L1114.6 449.7 M1114.6 449.7 L1115.4 436.1 M1115.4 436.1 L1112.7 432.2 M1115.2 676.4 L1103.1 675.8 M1114.6 610.8 L1126.9 607.7 M1126.9 607.7 L1129.5 604.6 M1129.5 604.6 L1123.0 592.8 M1123.0 592.8 L1115.2 593.9 M1116.3 674.1 L1116.8 664.9 M1116.8 664.9 L1111.8 661.0 M1117.2 523.3 L1130.9 524.2 M1130.9 524.2 L1131.4 524.1 M1131.4 524.1 L1136.1 511.8 M1136.1 511.8 L1131.7 504.5 M1131.7 504.5 L1114.2 512.8 M1117.0 648.8 L1125.6 650.8 M1125.6 650.8 L1131.8 645.8 M1131.8 645.8 L1130.8 635.4 M1130.8 635.4 L1130.3 635.1 M1130.3 635.1 L1114.6 637.0 M1118.2 483.5 L1125.7 481.2 M1125.7 481.2 L1127.0 469.1 M1127.0 469.1 L1121.2 466.3 M1121.2 466.3 L1116.0 465.7 M1130.3 635.1 L1125.6 623.4 M1125.6 623.4 L1115.2 621.4 M1123.0 592.8 L1127.4 587.8 M1127.4 587.8 L1122.5 578.6 M1122.5 578.6 L1115.0 577.4 M1131.7 504.5 L1131.5 500.3 M1131.5 500.3 L1128.7 498.5 M1128.7 498.5 L1117.2 493.6 M1116.3 565.7 L1123.4 564.7 M1123.4 564.7 L1129.8 549.5 M1129.8 549.5 L1128.5 548.9 M1128.5 548.9 L1115.0 549.4 M1115.0 549.4 L1114.7 549.5 M1115.0 549.4 L1114.7 534.3 M1116.8 664.9 L1128.2 662.5 M1128.2 662.5 L1125.6 650.8 M1128.5 548.9 L1125.4 538.8 M1125.4 538.8 L1115.9 533.0 M1114.6 449.7 L1129.4 448.9 M1129.4 448.9 L1130.3 435.3 M1130.3 435.3 L1115.4 436.1 M1125.4 538.8 L1130.9 524.2 M1130.3 435.3 L1132.4 432.8 M1132.4 432.8 L1128.5 418.9 M1128.5 418.9 L1127.9 418.2 M1127.9 418.2 L1116.8 417.6 M1122.5 578.6 L1129.0 571.4 M1129.0 571.4 L1123.4 564.7 M1129.8 549.5 L1132.4 549.6 M1132.4 549.6 L1138.8 541.3 M1138.8 541.3 L1136.9 528.7 M1136.9 528.7 L1131.4 524.1 M1125.6 623.4 L1131.3 618.7 M1131.3 618.7 L1126.9 607.7 M1129.2 398.1 L1133.5 405.0 M1133.5 405.0 L1148.3 404.2 M1148.3 404.2 L1148.7 403.6 M1148.7 403.6 L1144.3 388.8 M1144.3 388.8 L1130.9 387.3 M1128.7 498.5 L1126.8 481.7 M1126.8 481.7 L1125.7 481.2 M1128.3 675.7 L1130.0 674.1 M1130.0 674.1 L1129.6 663.5 M1129.6 663.5 L1128.2 662.5 M1140.9 677.2 L1130.0 674.1 M1129.0 571.4 L1139.2 571.7 M1139.2 571.7 L1136.4 553.4 M1136.4 553.4 L1132.4 549.6 M1127.4 587.8 L1135.1 587.2 M1135.1 587.2 L1136.7 586.3 M1136.7 586.3 L1140.1 572.4 M1140.1 572.4 L1139.2 571.7 M1127.9 418.2 L1133.5 405.0 M1121.2 466.3 L1132.1 451.2 M1132.1 451.2 L1129.4 448.9 M1130.8 635.4 L1142.3 630.3 M1142.3 630.3 L1141.2 619.8 M1141.2 619.8 L1131.3 618.7 M1129.6 663.5 L1141.6 660.7 M1141.6 660.7 L1142.4 659.7 M1142.4 659.7 L1143.3 650.7 M1143.3 650.7 L1142.8 650.0 M1142.8 650.0 L1131.8 645.8 M1129.5 604.6 L1135.7 603.5 M1135.7 603.5 L1135.1 587.2 M1128.5 418.9 L1148.1 419.1 M1148.1 419.1 L1149.4 417.4 M1149.4 417.4 L1148.3 404.2 M1132.1 451.2 L1133.9 452.0 M1133.9 452.0 L1138.7 451.3 M1138.7 451.3 L1145.3 447.7 M1145.3 447.7 L1146.4 435.2 M1146.4 435.2 L1132.4 432.8 M1144.3 388.8 L1148.3 384.7 M1148.3 384.7 L1148.0 383.2 M1127.0 469.1 L1133.5 468.5 M1133.5 468.5 L1134.5 467.4 M1134.5 467.4 L1133.9 452.0 M1131.5 500.3 L1137.5 494.6 M1137.5 494.6 L1137.4 482.9 M1137.4 482.9 L1126.8 481.7 M1141.2 619.8 L1142.1 618.5 M1142.1 618.5 L1140.4 606.1 M1140.4 606.1 L1139.1 604.6 M1139.1 604.6 L1135.7 603.5 M1136.1 511.8 L1147.6 512.9 M1147.6 512.9 L1151.9 510.5 M1151.9 510.5 L1152.5 495.5 M1152.5 495.5 L1152.2 495.3 M1152.2 495.3 L1137.5 494.6 M1137.4 482.9 L1139.1 480.5 M1139.1 480.5 L1133.5 468.5 M1136.9 528.7 L1149.5 527.3 M1149.5 527.3 L1147.6 512.9 M1139.1 604.6 L1147.9 591.9 M1147.9 591.9 L1136.7 586.3 M1140.1 572.4 L1149.9 572.1 M1149.9 572.1 L1152.3 570.7 M1152.3 570.7 L1153.4 556.6 M1153.4 556.6 L1150.8 554.5 M1150.8 554.5 L1136.4 553.4 M1139.1 480.5 L1148.1 478.4 M1148.1 478.4 L1148.8 466.1 M1148.8 466.1 L1144.8 465.1 M1144.8 465.1 L1134.5 467.4 M1142.3 663.6 L1141.6 660.7 M1142.8 650.0 L1145.9 632.8 M1145.9 632.8 L1142.3 630.3 M1143.3 650.7 L1144.9 650.4 M1151.3 633.2 L1145.9 632.8 M1144.8 465.1 L1138.7 451.3 M1152.2 495.3 L1151.5 480.6 M1151.5 480.6 L1148.1 478.4 M1142.1 618.5 L1163.8 614.2 M1165.7 611.6 L1165.5 611.1 M1165.5 611.1 L1156.1 605.0 M1156.1 605.0 L1140.4 606.1 M1146.4 435.2 L1147.5 434.3 M1147.5 434.3 L1148.1 419.1 M1147.9 591.9 L1149.2 591.8 M1149.2 591.8 L1152.1 589.1 M1152.1 589.1 L1149.9 572.1 M1148.8 466.1 L1150.7 464.8 M1150.7 464.8 L1148.6 450.0 M1148.6 450.0 L1145.3 447.7 M1138.8 541.3 L1150.4 539.5 M1150.4 539.5 L1152.6 529.8 M1152.6 529.8 L1149.5 527.3 M1148.6 450.0 L1163.1 450.6 M1163.1 450.6 L1163.5 450.2 M1163.5 450.2 L1163.4 435.5 M1163.4 435.5 L1147.5 434.3 M1150.8 554.5 L1151.5 540.9 M1151.5 540.9 L1150.4 539.5 M1156.1 605.0 L1149.2 591.8 M1148.3 384.7 L1161.0 384.6 M1161.0 384.6 L1160.9 383.4 M1149.4 417.4 L1162.9 419.3 M1162.9 419.3 L1165.7 416.8 M1165.7 416.8 L1166.5 405.0 M1166.5 405.0 L1161.3 400.3 M1161.3 400.3 L1148.7 403.6 M1152.6 529.8 L1164.7 526.9 M1164.7 526.9 L1165.7 517.0 M1165.7 517.0 L1163.4 513.8 M1163.4 513.8 L1151.9 510.5 M1150.7 464.8 L1153.5 464.6 M1153.5 464.6 L1162.6 454.4 M1162.6 454.4 L1163.1 450.6 M1161.3 400.3 L1164.0 387.1 M1164.0 387.1 L1161.0 384.6 M1151.5 480.6 L1162.8 478.2 M1162.8 478.2 L1163.7 471.2 M1163.7 471.2 L1153.5 464.6 M1153.4 556.6 L1165.1 552.9 M1165.1 552.9 L1167.1 546.2 M1167.1 546.2 L1165.9 544.2 M1165.9 544.2 L1151.5 540.9 M1165.5 611.1 L1166.6 588.0 M1166.6 588.0 L1166.4 587.9 M1166.4 587.9 L1152.1 589.1 M1152.5 495.5 L1163.8 494.4 M1163.8 494.4 L1168.0 484.1 M1168.0 484.1 L1162.8 478.2 M1166.4 587.9 L1161.7 572.8 M1161.7 572.8 L1152.3 570.7 M1143.0 659.8 L1142.4 659.7 M1182.8 592.2 L1182.1 589.3 M1182.1 589.3 L1177.9 585.9 M1177.9 585.9 L1166.6 588.0 M1163.4 435.5 L1163.8 435.1 M1163.8 435.1 L1162.9 419.3 M1164.0 387.1 L1178.5 383.7 M1178.5 383.7 L1178.5 383.6 M1165.9 544.2 L1166.3 528.8 M1166.3 528.8 L1164.7 526.9 M1163.4 513.8 L1168.1 500.0 M1168.1 500.0 L1163.8 494.4 M1163.7 471.2 L1167.2 468.1 M1167.2 468.1 L1165.4 460.1 M1165.4 460.1 L1162.6 454.4 M1161.7 572.8 L1164.7 570.7 M1164.7 570.7 L1168.6 558.4 M1168.6 558.4 L1165.1 552.9 M1165.4 460.1 L1177.6 459.3 M1177.6 459.3 L1177.8 458.5 M1177.8 458.5 L1176.6 452.0 M1176.6 452.0 L1163.5 450.2 M1177.9 585.9 L1180.6 573.0 M1180.6 573.0 L1164.7 570.7 M1163.8 435.1 L1179.2 433.7 M1179.2 433.7 L1178.7 420.5 M1178.7 420.5 L1165.7 416.8 M1168.6 558.4 L1179.5 560.9 M1179.5 560.9 L1182.8 556.5 M1182.8 556.5 L1177.1 544.9 M1177.1 544.9 L1167.1 546.2 M1168.0 484.1 L1176.4 483.2 M1176.4 483.2 L1181.6 478.1 M1181.6 478.1 L1181.3 472.1 M1181.3 472.1 L1176.7 467.2 M1176.7 467.2 L1167.2 468.1 M1165.7 517.0 L1177.9 514.5 M1177.9 514.5 L1181.8 510.9 M1181.8 510.9 L1178.7 500.4 M1178.7 500.4 L1168.1 500.0 M1180.6 573.0 L1182.1 571.5 M1182.1 571.5 L1179.5 560.9 M1176.7 467.2 L1177.6 459.3 M1176.6 452.0 L1179.3 449.0 M1179.3 449.0 L1179.3 433.7 M1179.3 433.7 L1179.2 433.7 M1166.5 405.0 L1177.4 403.6 M1177.4 403.6 L1181.3 398.2 M1181.3 398.2 L1178.5 383.7 M1166.3 528.8 L1179.7 530.8 M1179.7 530.8 L1182.0 527.9 M1182.0 527.9 L1177.9 514.5 M1182.1 589.3 L1187.7 587.3 M1196.9 578.9 L1195.9 573.5 M1195.9 573.5 L1193.5 571.8 M1193.5 571.8 L1182.1 571.5 M1178.7 500.4 L1181.5 496.7 M1181.5 496.7 L1176.4 483.2 M1177.1 544.9 L1182.5 539.8 M1182.5 539.8 L1179.7 530.8 M1181.3 472.1 L1195.1 463.3 M1195.1 463.3 L1194.1 459.9 M1194.1 459.9 L1177.8 458.5 M1177.4 403.6 L1183.1 415.5 M1183.1 415.5 L1194.0 414.8 M1194.0 414.8 L1196.0 413.0 M1196.0 413.0 L1196.2 401.3 M1196.2 401.3 L1181.3 398.2 M1178.7 420.5 L1183.1 415.5 M1196.2 401.3 L1197.8 399.3 M1197.8 399.3 L1197.9 385.0 M1197.9 385.0 L1196.9 383.8 M1181.5 496.7 L1193.6 494.5 M1193.6 494.5 L1194.4 493.5 M1194.4 493.5 L1195.6 484.0 M1195.6 484.0 L1181.6 478.1 M1194.1 459.9 L1194.7 451.0 M1194.7 451.0 L1179.3 449.0 M1179.3 433.7 L1194.3 434.4 M1194.3 434.4 L1195.4 433.6 M1195.4 433.6 L1194.0 414.8 M1182.8 556.5 L1192.3 554.1 M1192.3 554.1 L1193.0 542.3 M1193.0 542.3 L1182.5 539.8 M1193.5 571.8 L1194.6 556.4 M1194.6 556.4 L1192.3 554.1 M1182.0 527.9 L1192.8 524.3 M1192.8 524.3 L1193.9 513.4 M1193.9 513.4 L1181.8 510.9 M1193.0 542.3 L1195.0 540.9 M1195.0 540.9 L1196.7 529.2 M1196.7 529.2 L1192.8 524.3 M1193.9 513.4 L1195.7 512.0 M1195.7 512.0 L1193.6 494.5 M1195.6 484.0 L1197.0 483.0 M1197.0 483.0 L1199.6 470.0 M1199.6 470.0 L1195.6 463.7 M1195.6 463.7 L1195.1 463.3 M1194.7 451.0 L1194.9 450.7 M1194.9 450.7 L1194.3 434.4 M1195.6 463.7 L1211.6 457.9 M1211.6 457.9 L1213.4 451.7 M1213.4 451.7 L1211.6 449.5 M1211.6 449.5 L1194.9 450.7 M1195.4 433.6 L1210.4 432.9 M1210.4 432.9 L1211.3 419.3 M1211.3 419.3 L1209.6 416.2 M1209.6 416.2 L1196.0 413.0 M1211.6 449.5 L1211.3 433.7 M1211.3 433.7 L1210.4 432.9 M1194.6 556.4 L1207.2 556.8 M1207.2 556.8 L1211.5 552.2 M1211.5 552.2 L1210.5 545.5 M1210.5 545.5 L1208.9 543.7 M1208.9 543.7 L1195.0 540.9 M1196.7 529.2 L1210.2 527.5 M1210.2 527.5 L1210.5 527.2 M1210.5 527.2 L1205.9 511.8 M1205.9 511.8 L1195.7 512.0 M1195.9 573.5 L1207.6 568.5 M1207.6 568.5 L1207.2 556.8 M1209.6 416.2 L1217.0 401.3 M1217.0 401.3 L1216.1 400.2 M1216.1 400.2 L1197.8 399.3 M1205.9 511.8 L1207.9 510.2 M1207.9 510.2 L1209.1 498.2 M1209.1 498.2 L1194.4 493.5 M1216.1 400.2 L1215.0 387.8 M1215.0 387.8 L1212.3 385.5 M1212.3 385.5 L1197.9 385.0 M1211.0 570.4 L1207.6 568.5 M1208.9 543.7 L1210.2 527.5 M1209.1 498.2 L1210.7 496.8 M1210.7 496.8 L1210.9 484.0 M1210.9 484.0 L1197.0 483.0 M1211.3 433.7 L1226.3 433.6 M1226.3 433.6 L1228.7 431.9 M1228.7 431.9 L1231.3 420.1 M1231.3 420.1 L1230.0 418.5 M1230.0 418.5 L1211.3 419.3 M1210.5 527.2 L1224.1 526.7 M1224.1 526.7 L1224.5 526.0 M1224.5 526.0 L1225.5 512.7 M1225.5 512.7 L1224.2 511.4 M1224.2 511.4 L1207.9 510.2 M1210.5 545.5 L1226.0 537.2 M1226.0 537.2 L1224.1 526.7 M1222.4 563.5 L1223.2 557.2 M1223.2 557.2 L1222.9 556.9 M1222.9 556.9 L1211.5 552.2 M1211.6 457.9 L1213.7 468.6 M1213.7 468.6 L1220.5 467.7 M1220.5 467.7 L1221.5 452.3 M1221.5 452.3 L1213.4 451.7 M1210.9 484.0 L1214.3 481.5 M1214.3 481.5 L1212.6 470.1 M1212.6 470.1 L1199.6 470.0 M1210.7 496.8 L1222.7 497.5 M1222.7 497.5 L1224.2 495.4 M1224.2 495.4 L1225.2 486.2 M1225.2 486.2 L1222.3 483.5 M1222.3 483.5 L1214.3 481.5 M1212.6 470.1 L1213.7 468.6 M1212.3 385.5 L1212.4 384.0 M1221.5 452.3 L1227.0 451.5 M1227.0 451.5 L1226.3 433.6 M1224.2 511.4 L1222.7 497.5 M1230.0 418.5 L1227.1 404.8 M1227.1 404.8 L1224.9 403.0 M1224.9 403.0 L1217.0 401.3 M1222.3 483.5 L1227.3 468.9 M1227.3 468.9 L1220.5 467.7 M1228.7 539.9 L1226.0 537.2 M1222.9 556.9 L1228.7 539.9 M1228.7 539.9 L1239.0 542.7 M1239.0 542.7 L1243.3 530.4 M1243.3 530.4 L1240.2 526.0 M1240.2 526.0 L1224.5 526.0 M1225.5 512.7 L1238.7 509.2 M1238.7 509.2 L1239.3 499.1 M1239.3 499.1 L1224.2 495.4 M1215.0 387.8 L1223.5 384.2 M1225.2 486.2 L1239.0 483.2 M1239.0 483.2 L1239.8 482.2 M1239.8 482.2 L1236.4 470.6 M1236.4 470.6 L1235.7 470.1 M1235.7 470.1 L1229.2 468.1 M1229.2 468.1 L1227.3 468.9 M1224.9 403.0 L1231.8 387.4 M1231.8 387.4 L1228.5 384.2 M1231.8 387.4 L1243.0 388.3 M1243.0 388.3 L1246.3 385.0 M1246.3 385.0 L1246.0 384.4 M1231.3 420.1 L1244.6 418.5 M1244.6 418.5 L1248.0 415.7 M1248.0 415.7 L1246.9 405.1 M1246.9 405.1 L1242.9 400.9 M1242.9 400.9 L1227.1 404.8 M1229.2 468.1 L1227.8 451.9 M1227.8 451.9 L1227.0 451.5 M1232.6 557.4 L1223.2 557.2 M1239.2 543.1 L1239.0 542.7 M1227.8 451.9 L1239.4 451.1 M1239.4 451.1 L1242.6 449.9 M1242.6 449.9 L1242.0 438.3 M1242.0 438.3 L1228.7 431.9 M1235.7 470.1 L1239.4 451.1 M1240.2 526.0 L1244.1 513.2 M1244.1 513.2 L1238.7 509.2 M1239.3 499.1 L1239.9 498.3 M1239.9 498.3 L1239.0 483.2 M1244.1 513.2 L1251.2 513.2 M1251.2 513.2 L1255.1 509.3 M1255.1 509.3 L1257.9 500.3 M1257.9 500.3 L1255.3 496.4 M1255.3 496.4 L1239.9 498.3 M1242.9 400.9 L1243.0 388.3 M1242.0 438.3 L1246.9 433.9 M1246.9 433.9 L1244.6 418.5 M1236.4 470.6 L1246.3 465.4 M1246.3 465.4 L1245.3 452.8 M1245.3 452.8 L1244.6 451.0 M1244.6 451.0 L1242.6 449.9 M1246.3 385.0 L1252.3 384.5 M1239.8 482.2 L1254.0 482.0 M1254.0 482.0 L1256.6 470.2 M1256.6 470.2 L1246.3 465.4 M1255.3 496.4 L1255.2 483.4 M1255.2 483.4 L1254.0 482.0 M1246.9 405.1 L1262.0 398.5 M1262.0 398.5 L1260.0 384.6 M1246.9 433.9 L1260.0 434.8 M1260.0 434.8 L1263.3 432.0 M1263.3 432.0 L1262.1 419.2 M1262.1 419.2 L1248.0 415.7 M1244.6 451.0 L1258.2 447.8 M1258.2 447.8 L1260.0 434.8 M1256.6 470.2 L1257.2 469.6 M1257.2 469.6 L1256.7 461.4 M1256.7 461.4 L1245.3 452.8 M1243.3 530.4 L1251.3 530.0 M1256.1 526.7 L1257.2 525.1 M1257.2 525.1 L1251.2 513.2 M1257.2 469.6 L1266.7 467.6 M1266.7 467.6 L1267.7 453.0 M1267.7 453.0 L1261.8 451.2 M1261.8 451.2 L1256.7 461.4 M1255.2 483.4 L1270.5 484.6 M1270.5 484.6 L1272.9 482.7 M1272.9 482.7 L1268.6 468.5 M1268.6 468.5 L1266.7 467.6 M1257.2 525.1 L1258.5 525.0 M1269.1 523.4 L1269.5 514.8 M1269.5 514.8 L1255.1 509.3 M1257.9 500.3 L1268.9 499.8 M1268.9 499.8 L1270.6 498.3 M1270.6 498.3 L1270.5 484.6 M1261.8 451.2 L1258.2 447.8 M1262.0 398.5 L1267.5 403.7 M1267.5 403.7 L1275.5 402.4 M1275.5 402.4 L1278.5 385.8 M1278.5 385.8 L1277.5 385.0 M1277.5 385.0 L1274.6 384.8 M1262.1 419.2 L1263.2 418.2 M1263.2 418.2 L1267.5 403.7 M1267.7 453.0 L1278.8 449.1 M1278.8 449.1 L1277.5 437.0 M1277.5 437.0 L1263.3 432.0 M1269.5 514.8 L1271.7 511.8 M1271.7 511.8 L1268.9 499.8 M1268.6 468.5 L1270.0 468.1 M1270.0 468.1 L1279.3 449.5 M1279.3 449.5 L1278.8 449.1 M1272.9 482.7 L1284.5 481.9 M1284.5 481.9 L1286.1 480.1 M1286.1 480.1 L1286.1 470.8 M1286.1 470.8 L1281.8 466.6 M1281.8 466.6 L1270.0 468.1 M1281.7 526.0 L1285.5 510.8 M1285.5 510.8 L1271.7 511.8 M1270.6 498.3 L1283.6 499.0 M1283.6 499.0 L1286.4 494.6 M1286.4 494.6 L1284.5 481.9 M1277.5 437.0 L1279.6 434.9 M1279.6 434.9 L1280.4 419.3 M1280.4 419.3 L1263.2 418.2 M1277.5 385.0 L1277.5 384.8 M1280.4 419.3 L1282.4 417.2 M1282.4 417.2 L1276.7 403.0 M1276.7 403.0 L1275.5 402.4 M1279.6 434.9 L1294.4 432.4 M1294.4 432.4 L1296.8 422.6 M1296.8 422.6 L1290.8 416.4 M1290.8 416.4 L1282.4 417.2 M1279.3 449.5 L1280.6 450.4 M1280.6 450.4 L1289.7 451.0 M1289.7 451.0 L1293.1 450.1 M1293.1 450.1 L1296.3 434.8 M1296.3 434.8 L1294.4 432.4 M1276.7 403.0 L1291.0 400.6 M1291.0 400.6 L1292.2 386.2 M1292.2 386.2 L1278.5 385.8 M1292.2 386.2 L1292.4 386.1 M1292.4 386.1 L1292.4 385.0 M1290.8 416.4 L1294.5 404.9 M1294.5 404.9 L1291.0 400.6 M1281.8 466.6 L1280.6 450.4 M1285.5 510.8 L1286.1 510.2 M1286.1 510.2 L1283.6 499.0 M1289.1 510.7 L1286.1 510.2 M1286.1 470.8 L1292.8 466.7 M1292.8 466.7 L1289.7 451.0 M1300.2 496.2 L1286.4 494.6 M1296.8 422.6 L1310.4 419.2 M1310.4 419.2 L1312.1 417.6 M1312.1 417.6 L1306.5 404.6 M1306.5 404.6 L1294.5 404.9 M1296.3 434.8 L1308.9 438.8 M1308.9 438.8 L1310.4 437.6 M1310.4 437.6 L1310.4 419.2 M1318.9 484.0 L1318.8 483.9 M1318.8 483.9 L1286.1 480.1 M1306.5 404.6 L1311.3 395.2 M1311.3 395.2 L1309.5 387.7 M1309.5 387.7 L1292.4 386.1 M1318.8 483.9 L1311.7 471.6 M1311.7 471.6 L1301.3 465.5 M1301.3 465.5 L1292.8 466.7 M1386.1 453.6 L1378.7 454.1 M1378.7 454.1 L1378.4 456.5 M1301.3 465.5 L1298.9 452.0 M1298.9 452.0 L1293.1 450.1 M1330.6 484.0 L1326.9 450.2 M1326.9 450.2 L1326.4 449.9 M1326.4 449.9 L1313.8 454.0 M1313.8 454.0 L1311.7 471.6 M1298.9 452.0 L1307.7 448.4 M1307.7 448.4 L1308.9 438.8 M1313.8 454.0 L1307.7 448.4 M1378.7 454.1 L1375.7 449.4 M1375.7 449.4 L1359.2 449.7 M1359.2 449.7 L1358.6 450.2 M1358.6 450.2 L1359.2 469.8 M1310.4 437.6 L1323.3 437.7 M1323.3 437.7 L1327.2 432.2 M1327.2 432.2 L1326.3 418.1 M1326.3 418.1 L1326.0 417.8 M1326.0 417.8 L1312.1 417.6 M1309.5 387.7 L1310.4 386.4 M1310.4 386.4 L1310.5 385.2 M1326.4 449.9 L1323.3 437.7 M1339.7 487.0 L1343.1 448.5 M1343.1 448.5 L1326.9 450.2 M1326.0 417.8 L1328.4 406.5 M1328.4 406.5 L1324.8 400.5 M1324.8 400.5 L1311.3 395.2 M1358.6 450.2 L1343.5 448.1 M1343.5 448.1 L1343.1 448.5 M1324.8 400.5 L1330.9 386.7 M1330.9 386.7 L1329.1 385.5 M1322.1 385.4 L1310.4 386.4 M1343.5 448.1 L1342.4 437.3 M1342.4 437.3 L1327.2 432.2 M1326.3 418.1 L1345.8 420.1 M1345.8 420.1 L1345.8 420.0 M1345.8 420.0 L1347.2 401.1 M1347.2 401.1 L1344.7 399.5 M1344.7 399.5 L1328.4 406.5 M1344.7 399.5 L1340.6 386.4 M1340.6 386.4 L1330.9 386.7 M1340.6 386.4 L1341.1 385.6 M1347.2 401.1 L1355.9 400.5 M1355.9 400.5 L1360.3 397.0 M1360.3 397.0 L1360.9 385.9 M1342.4 437.3 L1345.3 433.4 M1345.3 433.4 L1345.8 420.1 M1345.3 433.4 L1360.4 435.0 M1360.4 435.0 L1361.1 434.2 M1361.1 434.2 L1359.9 420.3 M1359.9 420.3 L1345.8 420.0 M1359.2 449.7 L1360.4 435.0 M1359.9 420.3 L1363.4 417.3 M1363.4 417.3 L1355.9 400.5 M1375.7 449.4 L1379.2 437.3 M1379.2 437.3 L1376.3 434.2 M1376.3 434.2 L1361.1 434.2 M1363.4 417.3 L1374.5 416.1 M1374.5 416.1 L1375.6 415.1 M1375.6 415.1 L1375.3 400.6 M1375.3 400.6 L1375.3 400.5 M1375.3 400.5 L1360.3 397.0 M1375.3 400.5 L1375.5 399.4 M1374.5 416.1 L1376.3 434.2 M1379.2 437.3 L1388.8 435.6 M1382.2 415.8 L1375.6 415.1 M1375.3 400.6 L1375.7 400.6" stroke="#3dbdd0" stroke-width="0.85" fill="none"/>
<path d="M996.3 539.7 L1012.6 527.2 L1015.7 507 L1020.4 506.2 L1024.3 513.2 L1028.2 528.8 L1017.3 535 L1016.5 544.3 L1011 539.7Z" fill="#78aec3" stroke="#5f9db3" stroke-width="0.6"/>
<path d="M1154 462 L1161 439.4 L1165 439.4 L1173.5 454.2 L1163.4 463.5Z" fill="#78aec3" stroke="#5f9db3" stroke-width="0.6"/>
<path d="M1238 438 L1243 420 L1252 411 L1265 418 L1258 432 L1247 441Z" fill="#78aec3" stroke="#5f9db3" stroke-width="0.6"/>
<path d="M1254 518 L1262 502 L1275 495 L1283 505 L1285 527 L1272 522Z" fill="#78aec3" stroke="#5f9db3" stroke-width="0.6"/>
<path d="M1148 505 L1162.6 503.1 L1170 504 L1168 526 L1155 529Z" fill="#78aec3" stroke="#5f9db3" stroke-width="0.6"/>
<path d="M1185 552.5 L1191 541 L1202.5 543.75 L1218.75 555 L1210 560 L1200 573.75 L1192.5 566.25 L1187.5 560Z" fill="#e39186" stroke="#c77a70" stroke-width="0.6"/>
<path d="M1133.8 519.5 L1141.6 507 L1152 504 L1155.6 519.5 L1149.4 531.9Z" fill="#dfa8a6"/>
<path d="M1128.5 383.0 L1373.0 386.0 L1376.0 402.0 L1385.0 422.0 L1389.0 434.5 L1386.0 454.0 L1377.0 457.0 L1364.0 464.5 L1350.0 480.0 L1341.0 488.5 L1337.0 484.0 L1317.0 484.0 L1297.0 498.5 L1290.0 507.0 L1285.0 527.5 L1275.0 523.0 L1260.0 524.0 L1242.5 536.0 L1232.5 557.5 L1220.0 565.0 L1195.0 580.0 L1182.5 592.5 L1165.0 612.5 L1152.5 630.0 L1145.0 650.0 L1140.0 675.0 L1141.0 677.4 L1115.4 674.0 L1114.3 690.9 L1107.5 694.3 L1105.3 685.3 L995.0 676.7 L991.7 666.7 L985.0 656.7 L985.8 643.0 L983.3 625.0 L985.8 611.7 L990.0 596.7 L976.7 540.0 L964.6 465.6 L1017.7 465.3 L1019.7 453.1 L1028.4 451.0 L1029.9 444.4 L1037.6 437.2 L1052.9 434.2 L1063.1 428.6 L1074.4 424.5 L1076.4 417.8 L1081.5 414.8 L1088.7 411.2 L1091.7 414.8 L1096.8 409.7 L1106.0 406.1 L1112.1 407.6 L1118.3 398.4 L1125.4 393.3 L1128.5 383.0Z" stroke="#3dbdd0" stroke-width="0.9" fill="none"/>
</svg>
<svg class="a" style="left:824px;top:375px" width="705" height="328" viewBox="824 375 705 328">
<g class="ml" font-size="10.5" font-weight="bold" letter-spacing="1.6" fill="#a6a6a6" stroke="#fff" stroke-width="2" paint-order="stroke" text-anchor="middle">
<text x="950" y="419">TENNESSEE</text>
<text x="916.5" y="578">ALABAMA</text>
<text x="1063.3" y="602.5">GEORGIA</text>
<text x="1224.3" y="433.5">NORTH</text>
<text x="1224.4" y="447">CAROLINA</text>
<text x="1161.4" y="516.5">SOUTH</text>
<text x="1161.2" y="530">CAROLINA</text>
<text x="829" y="576">PI</text>
</g>
<g font-size="11" fill="#7a7a7a" stroke="#fff" stroke-width="2" paint-order="stroke" text-anchor="middle">
<text x="1034.8" y="428">Knoxville</text>
<text x="1015" y="522">Atlanta</text>
<text x="1283" y="516.5">Wilmington</text>
<text x="1019.8" y="701.8">Tallahassee</text>
<text x="1353" y="379.5">Norfolk</text>
</g>
<g fill="#555"><circle cx="1034.4" cy="416" r="1.4"/><circle cx="1015" cy="528" r="1.4"/><circle cx="1283" cy="504" r="1.4"/><circle cx="1019.8" cy="690.2" r="1.4"/></g>
</svg>
<div class="a" style="left:833px;top:383.5px;width:28px;height:56px;background:#fff;border-radius:4px;box-shadow:0 0 0 1.5px rgba(0,0,0,0.1)"></div>
<div class="a" style="left:833px;top:411.3px;width:28px;height:1px;background:#e4e4e4"></div>
<svg class="a" style="left:833px;top:383.5px" width="29" height="56"><path d="M13.5 8.5 V19.5 M8 14 H19 M8.2 41.5 H18.8" stroke="#222" stroke-width="2.2"/></svg>
<div class="a" style="left:833px;top:594px;width:134px;height:100px;background:rgba(255,255,255,0.55);border-radius:3px"></div>
<div class="a" style="left:842.7px;top:598.6px;width:8.8px;height:91.2px;border-radius:4px;background:linear-gradient(#d4685c 0%,#f28a78 33%,#c59895 47%,#3e7f9e 68%,#5bc8da 100%)"></div>
<div class="t" style="left:857.3px;top:602.3px;font-size:11px;color:#555;letter-spacing:0px">74,663,101,000.62</div>
<div class="t" style="left:857.3px;top:675.5px;font-size:11px;color:#555;letter-spacing:0px">13,759,101.13</div>
<div class="a" style="left:1283px;top:687px;width:246px;height:17px;background:rgba(255,255,255,0.5)"></div>
<div class="t" style="left:1287px;top:689.8px;font-size:11px;color:#444">&#169; Mapbox &#169; OpenStreetMap <b style="color:#333;margin-left:1px">Improve this map</b></div>

<div class="a card" style="left:108px;top:715px;width:1421px;height:200px"></div>
<div class="t" style="left:763.5px;top:728px;font-size:17px;color:#3a3a3a;letter-spacing:0.1px">Environmental</div>
<div class="a" style="left:108px;top:852px;width:1407px;height:19px;background:#f1f2f2"></div>
<div class="a" style="left:108px;top:890px;width:1407px;height:19px;background:#f1f2f2"></div>
<div class="a" style="left:108px;top:794px;width:1406px;height:1px;background:#d3d7dc"></div>
<div class="a" style="left:108px;top:832px;width:1421px;height:1.2px;background:#c5cad1"></div>
<div class="a" style="left:151.5px;top:756px;width:1px;height:145px;background:#dcdfe3"></div>
<div class="a" style="left:474.0px;top:833px;width:1px;height:70px;background:#e3e5e8"></div>
<div class="a" style="left:794.0px;top:833px;width:1px;height:70px;background:#e3e5e8"></div>
<div class="a" style="left:914.0px;top:833px;width:1px;height:70px;background:#e3e5e8"></div>
<div class="a" style="left:1033.7px;top:833px;width:1px;height:70px;background:#e3e5e8"></div>
<div class="a" style="left:1153.2px;top:833px;width:1px;height:70px;background:#e3e5e8"></div>
<div class="a" style="left:1273.0px;top:833px;width:1px;height:70px;background:#e3e5e8"></div>
<div class="a" style="left:1393.2px;top:833px;width:1px;height:70px;background:#e3e5e8"></div>
<div class="a" style="left:474.0px;top:765px;width:1px;height:19px;background:#e3e5e8"></div>
<div class="a" style="left:794.0px;top:765px;width:1px;height:19px;background:#e3e5e8"></div>
<div class="a" style="left:1033.7px;top:765px;width:1px;height:19px;background:#e3e5e8"></div>
<div class="a" style="left:1273.0px;top:765px;width:1px;height:19px;background:#e3e5e8"></div>
<div class="a" style="left:1513.2px;top:765px;width:1px;height:19px;background:#e3e5e8"></div>
<div class="a" style="left:474.0px;top:804px;width:1px;height:19px;background:#e3e5e8"></div>
<div class="a" style="left:914.0px;top:804px;width:1px;height:19px;background:#e3e5e8"></div>
<div class="a" style="left:794.0px;top:804px;width:1px;height:19px;background:#e3e5e8"></div>
<div class="a" style="left:1033.7px;top:804px;width:1px;height:19px;background:#e3e5e8"></div>
<div class="a" style="left:1153.2px;top:804px;width:1px;height:19px;background:#e3e5e8"></div>
<div class="a" style="left:1273.0px;top:804px;width:1px;height:19px;background:#e3e5e8"></div>
<div class="a" style="left:1393.2px;top:804px;width:1px;height:19px;background:#e3e5e8"></div>
<div class="a" style="left:1513.2px;top:804px;width:1px;height:19px;background:#e3e5e8"></div>
<div class="t th" style="left:482.5px;top:760.2px;">Environment Unit</div>
<div class="t th" style="left:482.5px;top:779.2px;">Region</div>
<div class="t tr" style="left:802.5px;top:760.2px;">kg</div>
<div class="t tr" style="left:802.5px;top:779.2px;">Georgia</div>
<div class="t tr" style="left:1042.5px;top:760.2px;">kg</div>
<div class="t tr" style="left:1042.5px;top:779.2px;">North Carolina</div>
<div class="t tr" style="left:1282px;top:760.2px;">kg</div>
<div class="t tr" style="left:1282px;top:779.2px;">South Carolina</div>
<div class="t th" style="left:159.5px;top:807.7px;">Industry Code</div>
<div class="t th" style="left:482.5px;top:807.7px;">Industry Description</div>
<div class="t th" style="left:802.5px;top:797.7px;">Environmental</div>
<div class="t th" style="left:802.5px;top:816.7px;">Output</div>
<div class="t th" style="left:1042.5px;top:797.7px;">Environmental</div>
<div class="t th" style="left:1042.5px;top:816.7px;">Output</div>
<div class="t th" style="left:1282px;top:797.7px;">Environmental</div>
<div class="t th" style="left:1282px;top:816.7px;">Output</div>
<div class="t th" style="left:922.5px;top:807.7px;letter-spacing:0.45px">Nominal Output</div>
<div class="t th" style="left:1162.5px;top:807.7px;letter-spacing:0.45px">Nominal Output</div>
<div class="t th" style="left:1402px;top:807.7px;letter-spacing:0.45px">Nominal Output</div>
<div class="t tv" style="right:1456.2px;top:837.7px;">1</div>
<div class="t tv" style="left:160.8px;top:837.7px;">1</div>
<div class="t tv" style="left:483.3px;top:837.7px;letter-spacing:0.3px">Oilseed farming</div>
<div class="t tv" style="left:810px;top:839.2px;letter-spacing:0px">18,960,195.38</div>
<div class="t tv" style="right:574.5px;top:837.7px;letter-spacing:0px">81,128,960.71</div>
<div class="t tv" style="left:1049.5px;top:839.2px;letter-spacing:0px">205,675,070.84</div>
<div class="t tv" style="right:334.5px;top:837.7px;letter-spacing:0px">880,065,020.85</div>
<div class="t tv" style="left:1289.3px;top:839.2px;letter-spacing:0px">44,887,120.27</div>
<div class="t tv" style="right:93.7px;top:837.7px;letter-spacing:0px">192,067,926.75</div>
<div class="t tv" style="right:1456.2px;top:856.7px;">2</div>
<div class="t tv" style="left:160.8px;top:856.7px;">10</div>
<div class="t tv" style="left:483.3px;top:856.7px;letter-spacing:0.3px">All other crop farming</div>
<div class="t tv" style="left:810px;top:858.2px;letter-spacing:0px">692,084,248.92</div>
<div class="t tv" style="right:574.5px;top:856.7px;letter-spacing:0px">1,472,749,497.11</div>
<div class="t tv" style="left:1049.5px;top:858.2px;letter-spacing:0px">370,192,678.95</div>
<div class="t tv" style="right:334.5px;top:856.7px;letter-spacing:0px">787,766,926.65</div>
<div class="t tv" style="left:1289.3px;top:858.2px;letter-spacing:0px">139,830,886.70</div>
<div class="t tv" style="right:93.7px;top:856.7px;letter-spacing:0px">297,558,958.15</div>
<div class="t tv" style="right:1456.2px;top:875.7px;">3</div>
<div class="t tv" style="left:160.8px;top:875.7px;">100</div>
<div class="t tv" style="left:483.3px;top:875.7px;letter-spacing:0.3px">Flavoring syrup and concentrate manufacturing</div>
<div class="t tv" style="left:810px;top:877.2px;letter-spacing:0px">16,202,429.95</div>
<div class="t tv" style="right:574.5px;top:875.7px;letter-spacing:0px">3,463,131,158.71</div>
<div class="t tv" style="left:1049.5px;top:877.2px;letter-spacing:0px">2,168,126.80</div>
<div class="t tv" style="right:334.5px;top:875.7px;letter-spacing:0px">463,418,604.82</div>
<div class="t tv" style="left:1289.3px;top:877.2px;color:#222">&#248;</div>
<div class="t tv" style="right:93.7px;top:875.7px;color:#c8c8c8">&#248;</div>
<div class="t tv" style="right:1456.2px;top:894.7px;">4</div>
<div class="t tv" style="left:160.8px;top:894.7px;">101</div>
<div class="t tv" style="left:483.3px;top:894.7px;letter-spacing:0.3px">Mayonnaise, dressing, and sauce manufacturing</div>
<div class="t tv" style="left:810px;top:896.2px;letter-spacing:0px">18,070,324.76</div>
<div class="t tv" style="right:574.5px;top:894.7px;letter-spacing:0px">433,756,543.38</div>
<div class="t tv" style="left:1049.5px;top:896.2px;letter-spacing:0px">999,477.41</div>
<div class="t tv" style="right:334.5px;top:894.7px;letter-spacing:0px">39,099,912.74</div>
<div class="t tv" style="left:1289.3px;top:896.2px;letter-spacing:0px">7,307,916.06</div>
<div class="t tv" style="right:93.7px;top:894.7px;letter-spacing:0px">256,460,206.89</div>
<svg class="a" style="left:440px;top:755px" width="360" height="70" viewBox="440 755 360 70"><g stroke="#333" stroke-width="1.5" fill="none"><path d="M779 762.5 L782.3 765.8 L779 769.1 M779 781.5 L782.3 784.8 L779 788.1 M460.3 815 L463.6 811.7 L466.9 815"/></g></svg>
<div class="a" style="left:1515px;top:833px;width:14px;height:70px;background:#f1f1f1"></div>
<div class="a" style="left:1517px;top:847px;width:10px;height:14px;background:#c1c1c1"></div>
<svg class="a" style="left:1515px;top:833px" width="14" height="14"><path d="M3.5 10 L7 6.5 L10.5 10 Z" fill="#a3a3a3"/></svg>
<!-- main scrollbar -->
<div class="a" style="left:1584px;top:327px;width:13px;height:574px;background:#f1f1f1"></div>
<div class="a" style="left:1597px;top:119px;width:1px;height:782px;background:#fff"></div>
<div class="a" style="left:1586px;top:342px;width:11px;height:342px;background:#c1c1c1"></div>
<svg class="a" style="left:1584px;top:327px" width="14" height="14"><path d="M3.5 10 L7 6.5 L10.5 10 Z" fill="#a3a3a3"/></svg>
<svg class="a" style="left:1584px;top:884px" width="14" height="14"><path d="M3.5 5 L7 8.5 L10.5 5 Z" fill="#505050"/></svg>
<!-- floating button -->
<svg class="a" style="left:1533px;top:834px;overflow:visible" width="60" height="60" viewBox="0 0 60 60">
<defs><filter id="fsh" x="-30%" y="-30%" width="160%" height="160%"><feDropShadow dx="0" dy="1" stdDeviation="1.5" flood-opacity="0.2"/></filter>
<clipPath id="lc2"><circle cx="50" cy="50" r="50"/></clipPath></defs>
<circle cx="30" cy="30" r="25.6" fill="#fff" filter="url(#fsh)"/>
<g clip-path="url(#lc2)" transform="translate(4.4 4.4) scale(0.512)"><rect width="100" height="100" fill="#0a8390"/>
<polygon points="36,0 65,0 116,110 -15,110" fill="#fff"/>
<polygon points="50,23 88,110 12,110" fill="#0a8390"/></g>
</svg>

<div class="bd" style="left:0;top:0;width:1600px;height:1px"></div>
<div class="bd" style="left:0;top:0;width:1px;height:901px"></div>
<div class="bd" style="left:1598px;top:0;width:2px;height:901px"></div>
<div class="bd" style="left:0;top:899px;width:1600px;height:2px"></div>
</body></html>
